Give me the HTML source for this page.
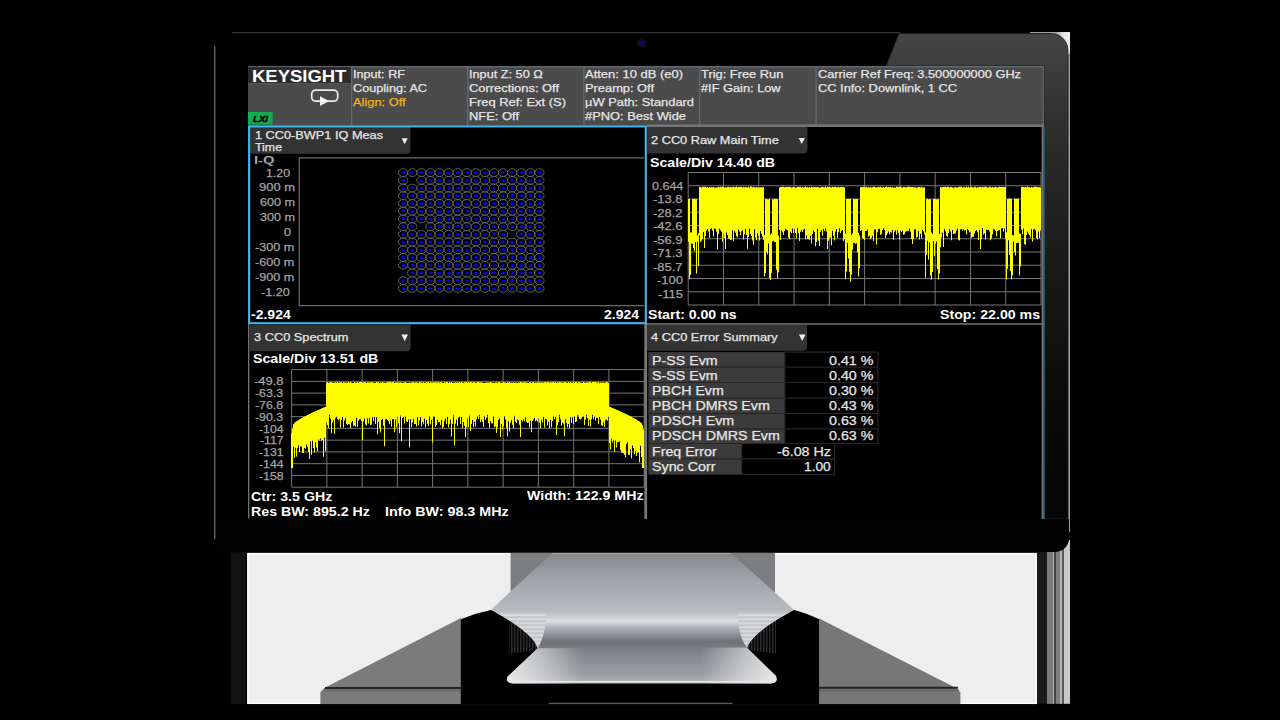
<!DOCTYPE html>
<html><head><meta charset="utf-8">
<style>
html,body{margin:0;padding:0;background:#000;}
body{width:1280px;height:720px;overflow:hidden;position:relative;font-family:"Liberation Sans", sans-serif;}
svg{position:absolute;left:0;top:0;}
.t{position:absolute;white-space:nowrap;line-height:1;z-index:2;transform-origin:0 0;-webkit-text-stroke:0.25px currentColor;}
</style></head>
<body>
<svg width="1280" height="720" viewBox="0 0 1280 720" style="z-index:0">
  <defs>
    <linearGradient id="bzR" gradientUnits="userSpaceOnUse" x1="0" y1="32" x2="0" y2="519">
      <stop offset="0" stop-color="#454545"/>
      <stop offset="0.24" stop-color="#2a2a2a"/>
      <stop offset="0.45" stop-color="#1c1c1c"/>
      <stop offset="0.6" stop-color="#131313"/>
      <stop offset="0.75" stop-color="#0a0a0a"/>
      <stop offset="1" stop-color="#050505"/>
    </linearGradient>
    <linearGradient id="stand" gradientUnits="userSpaceOnUse" x1="0" y1="553" x2="0" y2="683.5">
      <stop offset="0" stop-color="#84868a"/>
      <stop offset="0.15" stop-color="#9a9da1"/>
      <stop offset="0.36" stop-color="#b0b3b7"/>
      <stop offset="0.45" stop-color="#b8bbbf"/>
      <stop offset="0.52" stop-color="#dcdfe2"/>
      <stop offset="0.57" stop-color="#b0b3b7"/>
      <stop offset="0.68" stop-color="#6e7176"/>
      <stop offset="0.78" stop-color="#85888c"/>
      <stop offset="0.93" stop-color="#9a9da3"/>
      <stop offset="0.965" stop-color="#a5a8ac"/>
      <stop offset="1" stop-color="#bdbdbd"/>
    </linearGradient>
    <linearGradient id="standSide" gradientUnits="userSpaceOnUse" x1="507" y1="0" x2="777" y2="0">
      <stop offset="0" stop-color="#ffffff" stop-opacity="0.75"/>
      <stop offset="0.13" stop-color="#ffffff" stop-opacity="0.45"/>
      <stop offset="0.28" stop-color="#ffffff" stop-opacity="0"/>
      <stop offset="0.72" stop-color="#ffffff" stop-opacity="0"/>
      <stop offset="0.87" stop-color="#ffffff" stop-opacity="0.45"/>
      <stop offset="1" stop-color="#ffffff" stop-opacity="0.75"/>
    </linearGradient>
    <linearGradient id="neckL" gradientUnits="userSpaceOnUse" x1="0" y1="610" x2="0" y2="648">
      <stop offset="0" stop-color="#c9cbce"/>
      <stop offset="0.6" stop-color="#bfc1c4"/>
      <stop offset="1" stop-color="#77797c"/>
    </linearGradient>
    <pattern id="stripes" patternUnits="userSpaceOnUse" x="0" y="610" width="10" height="4">
      <rect width="10" height="4" fill="#d5d7da"/>
      <rect y="2.5" width="10" height="1.5" fill="#c0c2c5"/>
    </pattern>
    <linearGradient id="silver" x1="0" y1="0" x2="1" y2="0">
      <stop offset="0" stop-color="#d8d8d8"/>
      <stop offset="0.3" stop-color="#9a9a9a"/>
      <stop offset="0.6" stop-color="#e0e0e0"/>
      <stop offset="1" stop-color="#f0f0f0"/>
    </linearGradient>
    <pattern id="vstripes" patternUnits="userSpaceOnUse" x="0.3" y="0" width="3" height="10">
      <rect width="3" height="10" fill="#000"/>
      <rect x="1" width="1.1" height="10" fill="#3e3e3e"/>
    </pattern>
  </defs>
  <!-- bezel lines -->
  <path d="M232 32.6H900" stroke="#333" stroke-width="1.3"/>
  <path d="M214.8 46V539" stroke="#8a8a8a" stroke-width="1"/>
  <!-- silver corner -->
  <rect x="1050" y="32" width="20" height="22" fill="url(#silver)"/>
  <path d="M1030 32.8H1052" stroke="#a0a0a0" stroke-width="1.6"/>
  <path d="M899 33.5H1051A17 17 0 0 1 1068 50.5V519H1044V66H886Z" fill="url(#bzR)" stroke="#1c1c1c" stroke-width="0.8"/>
  <path d="M1069.2 52V532" stroke="#b0b0b0" stroke-width="1.4"/>
  <!-- bottom bezel -->
  <circle cx="641.7" cy="43.2" r="3" fill="#0a0a55"/>
  <circle cx="641.7" cy="43.2" r="4" fill="none" stroke="#1a1a1a" stroke-width="1"/>

  <!-- stand area -->
  <rect x="230.8" y="552.3" width="15" height="151.7" fill="#121212"/>
  <rect x="247.8" y="553.6" width="788.4" height="149.7" fill="#eeeeee" stroke="#ffffff" stroke-width="1.5"/>
  <rect x="1037" y="540" width="33" height="163.8" fill="#1a1a1a"/>
  <g>
    <rect x="1047" y="540" width="6" height="163.8" fill="#7a7a7a"/>
    <rect x="1053" y="540" width="1.3" height="163.8" fill="#b0b0b0"/>
    <rect x="1054.3" y="540" width="1.7" height="163.8" fill="#444"/>
    <rect x="1056" y="540" width="4" height="163.8" fill="#808080"/>
    <rect x="1060" y="540" width="2" height="163.8" fill="#b4b4b4"/>
    <rect x="1062" y="540" width="2" height="163.8" fill="#585858"/>
    <rect x="1064" y="540" width="6" height="163.8" fill="#c8c8c8"/>
  </g>
  <path d="M216 519H1069V538A14 14 0 0 1 1055 552H216Z" fill="#030303"/>
  <!-- gray triangles top -->
  <rect x="510.6" y="553" width="264.4" height="39.6" fill="#7c7d80"/>
  <!-- left gray region -->
  <path d="M461 704V618.1L326.7 686.8Q322 689 320.4 692.2V704Z" fill="#7b7b7b"/>
  <path d="M325 688H461" stroke="#222" stroke-width="2"/>
  <path d="M324 690.2H461" stroke="#6a6a6a" stroke-width="2"/>
  <!-- right gray region -->
  <path d="M819.2 704V618.6L953.6 686.8Q958.4 689 960.4 692.2V704Z" fill="#777"/>
  <path d="M819.2 687.8H958" stroke="#222" stroke-width="2"/>
  <path d="M819.2 690.4H959" stroke="#6a6a6a" stroke-width="2"/>
  <!-- black region under stand/ears -->
  <path d="M460.8 704V619.2Q476 613 490.8 610H794.2Q806 613 819.2 619.2V704Z" fill="#000"/>
  <path d="M508.9 653.9L537.2 649.7V612H508.9Z" fill="url(#vstripes)"/>
  <path d="M776.1 653.9L747.2 649.7V612H776.1Z" fill="url(#vstripes)"/>
  <!-- stand body -->
  <path d="M551.9 553H730.9L794.2 610C780 617 750 635 747.2 647.8L775.8 675.8Q779 682.5 771 683.5H513Q505 682.5 507.5 676.7L537.5 648.3C535 635 505 617 490.8 610Z" fill="url(#stand)"/>
  <!-- base side highlights -->
  <path d="M537.5 648.3L507.5 676.7Q505 682.5 513 683.5H771Q779 682.5 775.8 675.8L746.7 647.5Z" fill="url(#standSide)"/>
  <!-- striped neck sides -->
  <path d="M495.5 612.5C509 619 535 636 537.5 648.3C542 642 546 630 546.7 612.5Z" fill="url(#stripes)"/>
  <path d="M789.5 612.5C776 619 750 636 747.2 647.8C742 642 738 630 737.5 612.5Z" fill="url(#stripes)"/>
  <path d="M512 681.8H772" stroke="#e6e6e6" stroke-width="1.6"/>
  <path d="M548.6 703.3H732.6" stroke="#707070" stroke-width="1"/>
  <path d="M551.9 553.5H730.9" stroke="#a5a7aa" stroke-width="1"/>
</svg>

<svg width="1280" height="720" viewBox="0 0 1280 720" style="z-index:1">
  <!-- screen background -->
  <rect x="248" y="125" width="796" height="394" fill="#000"/>
  <!-- header -->
  <rect x="248" y="66.3" width="795.6" height="59.2" fill="#4b4b4b"/>
  <path d="M248 66.8H1043.6" stroke="#6f7f88" stroke-width="1"/>
  <rect x="248" y="67" width="102.8" height="16.5" fill="#2b2b2b"/>
  <path d="M248 83.6H350.8" stroke="#5a5a5a" stroke-width="1"/>
  <g stroke="#6c6c6c" stroke-width="1.2">
    <path d="M351.7 67V125.5"/><path d="M467.7 67V125.5"/><path d="M583.9 67V125.5"/><path d="M699.7 67V125.5"/><path d="M816.1 67V125.5"/><path d="M1043.2 67V125.5"/>
  </g>
  <rect x="248" y="112" width="24.6" height="12.5" fill="#12ad50"/>
  <text x="253" y="121.6" font-family="Liberation Sans" font-weight="bold" font-style="italic" font-size="9" textLength="15" lengthAdjust="spacingAndGlyphs" fill="#050505" stroke="#050505" stroke-width="0.5">LXI</text>
  <rect x="311.7" y="90.2" width="26" height="11" rx="4" fill="none" stroke="#ececec" stroke-width="1.7"/>
  <path d="M320 96.3L329 101.1L320 105.9Z" fill="#f4f4f4"/>

  <!-- gray panel borders -->
  <g stroke="#767676">
    <path d="M647 125.8H1044" stroke-width="2.6"/>
    <path d="M1042.7 126V519" stroke-width="2.1"/><path d="M1044.3 126V519" stroke="#2a5a70" stroke-width="1.2"/>
    <path d="M645 324H1044" stroke-width="1.6"/>
    <path d="M645.7 324V518.8" stroke-width="2.8"/>
    <path d="M248.7 324V518.5" stroke-width="1.3"/>
  </g>
  <!-- title boxes -->
  <g fill="#333">
    <path d="M250 127H410.4V149.7A4 4 0 0 1 406.4 153.7H250Z"/>
    <path d="M647.3 127H807.4V149.5A4 4 0 0 1 803.4 153.5H647.3Z"/>
    <path d="M249.3 325H410.6V347.2A4 4 0 0 1 406.6 351.2H249.3Z"/>
    <path d="M647 325H807V346.7A4 4 0 0 1 803 350.7H647Z"/>
  </g>
  <g fill="#f0f0f0">
    <path d="M401.7 138.2H407.6L404.65 144.2Z"/>
    <path d="M798.7 138.1H804.8L801.75 144.1Z"/>
    <path d="M401.4 334.4H408L404.7 341.3Z"/>
    <path d="M798.9 334.6H805.6L802.25 341.1Z"/>
  </g>
  <!-- plot 1 -->
  <path d="M644 157.8H299.3V305.6H644" fill="none" stroke="#6a6a6a" stroke-width="1.2"/>
  <ellipse cx="403.20" cy="172.60" rx="4.7" ry="3.9" fill="none" stroke="#626262" stroke-width="1"/><ellipse cx="403.19" cy="172.31" rx="1.75" ry="1.5" fill="#0000ff"/><ellipse cx="412.28" cy="172.60" rx="4.7" ry="3.9" fill="none" stroke="#626262" stroke-width="1"/><ellipse cx="411.99" cy="172.91" rx="1.75" ry="1.5" fill="#0000ff"/><ellipse cx="421.36" cy="172.60" rx="4.7" ry="3.9" fill="none" stroke="#626262" stroke-width="1"/><ellipse cx="421.56" cy="172.25" rx="1.75" ry="1.5" fill="#0000ff"/><ellipse cx="430.44" cy="172.60" rx="4.7" ry="3.9" fill="none" stroke="#626262" stroke-width="1"/><ellipse cx="430.58" cy="172.37" rx="1.75" ry="1.5" fill="#0000ff"/><ellipse cx="439.52" cy="172.60" rx="4.7" ry="3.9" fill="none" stroke="#626262" stroke-width="1"/><ellipse cx="439.48" cy="172.68" rx="1.75" ry="1.5" fill="#0000ff"/><ellipse cx="448.60" cy="172.60" rx="4.7" ry="3.9" fill="none" stroke="#626262" stroke-width="1"/><ellipse cx="448.24" cy="172.95" rx="1.75" ry="1.5" fill="#0000ff"/><ellipse cx="457.68" cy="172.60" rx="4.7" ry="3.9" fill="none" stroke="#626262" stroke-width="1"/><ellipse cx="457.55" cy="172.32" rx="1.75" ry="1.5" fill="#0000ff"/><ellipse cx="466.76" cy="172.60" rx="4.7" ry="3.9" fill="none" stroke="#626262" stroke-width="1"/><ellipse cx="466.98" cy="172.29" rx="1.75" ry="1.5" fill="#0000ff"/><ellipse cx="475.84" cy="172.60" rx="4.7" ry="3.9" fill="none" stroke="#626262" stroke-width="1"/><ellipse cx="475.47" cy="172.72" rx="1.75" ry="1.5" fill="#0000ff"/><ellipse cx="484.92" cy="172.60" rx="4.7" ry="3.9" fill="none" stroke="#626262" stroke-width="1"/><ellipse cx="484.90" cy="172.92" rx="1.75" ry="1.5" fill="#0000ff"/><ellipse cx="494.00" cy="172.60" rx="4.7" ry="3.9" fill="none" stroke="#626262" stroke-width="1"/><ellipse cx="494.23" cy="172.37" rx="1.75" ry="1.5" fill="#0000ff"/><ellipse cx="503.08" cy="172.60" rx="4.7" ry="3.9" fill="none" stroke="#626262" stroke-width="1"/><ellipse cx="502.72" cy="172.68" rx="1.75" ry="1.5" fill="#0000ff"/><ellipse cx="512.16" cy="172.60" rx="4.7" ry="3.9" fill="none" stroke="#626262" stroke-width="1"/><ellipse cx="512.14" cy="172.44" rx="1.75" ry="1.5" fill="#0000ff"/><ellipse cx="521.24" cy="172.60" rx="4.7" ry="3.9" fill="none" stroke="#626262" stroke-width="1"/><ellipse cx="521.57" cy="172.37" rx="1.75" ry="1.5" fill="#0000ff"/><ellipse cx="530.32" cy="172.60" rx="4.7" ry="3.9" fill="none" stroke="#626262" stroke-width="1"/><ellipse cx="530.43" cy="172.26" rx="1.75" ry="1.5" fill="#0000ff"/><ellipse cx="539.40" cy="172.60" rx="4.7" ry="3.9" fill="none" stroke="#626262" stroke-width="1"/><ellipse cx="539.74" cy="172.96" rx="1.75" ry="1.5" fill="#0000ff"/><ellipse cx="403.20" cy="180.32" rx="4.7" ry="3.9" fill="none" stroke="#626262" stroke-width="1"/><ellipse cx="403.29" cy="180.18" rx="1.75" ry="1.5" fill="#0000ff"/><ellipse cx="421.36" cy="180.32" rx="4.7" ry="3.9" fill="none" stroke="#626262" stroke-width="1"/><ellipse cx="421.54" cy="180.64" rx="1.75" ry="1.5" fill="#0000ff"/><ellipse cx="430.44" cy="180.32" rx="4.7" ry="3.9" fill="none" stroke="#626262" stroke-width="1"/><ellipse cx="430.68" cy="179.95" rx="1.75" ry="1.5" fill="#0000ff"/><ellipse cx="439.52" cy="180.32" rx="4.7" ry="3.9" fill="none" stroke="#626262" stroke-width="1"/><ellipse cx="439.52" cy="180.03" rx="1.75" ry="1.5" fill="#0000ff"/><ellipse cx="448.60" cy="180.32" rx="4.7" ry="3.9" fill="none" stroke="#626262" stroke-width="1"/><ellipse cx="448.64" cy="180.68" rx="1.75" ry="1.5" fill="#0000ff"/><ellipse cx="457.68" cy="180.32" rx="4.7" ry="3.9" fill="none" stroke="#626262" stroke-width="1"/><ellipse cx="457.97" cy="180.12" rx="1.75" ry="1.5" fill="#0000ff"/><ellipse cx="466.76" cy="180.32" rx="4.7" ry="3.9" fill="none" stroke="#626262" stroke-width="1"/><ellipse cx="466.80" cy="180.17" rx="1.75" ry="1.5" fill="#0000ff"/><ellipse cx="475.84" cy="180.32" rx="4.7" ry="3.9" fill="none" stroke="#626262" stroke-width="1"/><ellipse cx="475.57" cy="180.51" rx="1.75" ry="1.5" fill="#0000ff"/><ellipse cx="484.92" cy="180.32" rx="4.7" ry="3.9" fill="none" stroke="#626262" stroke-width="1"/><ellipse cx="485.13" cy="180.19" rx="1.75" ry="1.5" fill="#0000ff"/><ellipse cx="494.00" cy="180.32" rx="4.7" ry="3.9" fill="none" stroke="#626262" stroke-width="1"/><ellipse cx="493.94" cy="180.48" rx="1.75" ry="1.5" fill="#0000ff"/><ellipse cx="503.08" cy="180.32" rx="4.7" ry="3.9" fill="none" stroke="#626262" stroke-width="1"/><ellipse cx="503.26" cy="180.29" rx="1.75" ry="1.5" fill="#0000ff"/><ellipse cx="512.16" cy="180.32" rx="4.7" ry="3.9" fill="none" stroke="#626262" stroke-width="1"/><ellipse cx="511.85" cy="180.00" rx="1.75" ry="1.5" fill="#0000ff"/><ellipse cx="521.24" cy="180.32" rx="4.7" ry="3.9" fill="none" stroke="#626262" stroke-width="1"/><ellipse cx="520.98" cy="180.58" rx="1.75" ry="1.5" fill="#0000ff"/><ellipse cx="530.32" cy="180.32" rx="4.7" ry="3.9" fill="none" stroke="#626262" stroke-width="1"/><ellipse cx="530.32" cy="180.44" rx="1.75" ry="1.5" fill="#0000ff"/><ellipse cx="539.40" cy="180.32" rx="4.7" ry="3.9" fill="none" stroke="#626262" stroke-width="1"/><ellipse cx="539.29" cy="180.22" rx="1.75" ry="1.5" fill="#0000ff"/><ellipse cx="403.20" cy="188.04" rx="4.7" ry="3.9" fill="none" stroke="#626262" stroke-width="1"/><ellipse cx="402.94" cy="188.42" rx="1.75" ry="1.5" fill="#0000ff"/><ellipse cx="412.28" cy="188.04" rx="4.7" ry="3.9" fill="none" stroke="#626262" stroke-width="1"/><ellipse cx="412.36" cy="187.74" rx="1.75" ry="1.5" fill="#0000ff"/><ellipse cx="421.36" cy="188.04" rx="4.7" ry="3.9" fill="none" stroke="#626262" stroke-width="1"/><ellipse cx="421.52" cy="188.12" rx="1.75" ry="1.5" fill="#0000ff"/><ellipse cx="430.44" cy="188.04" rx="4.7" ry="3.9" fill="none" stroke="#626262" stroke-width="1"/><ellipse cx="430.53" cy="188.26" rx="1.75" ry="1.5" fill="#0000ff"/><ellipse cx="439.52" cy="188.04" rx="4.7" ry="3.9" fill="none" stroke="#626262" stroke-width="1"/><ellipse cx="439.61" cy="188.34" rx="1.75" ry="1.5" fill="#0000ff"/><ellipse cx="448.60" cy="188.04" rx="4.7" ry="3.9" fill="none" stroke="#626262" stroke-width="1"/><ellipse cx="448.98" cy="187.97" rx="1.75" ry="1.5" fill="#0000ff"/><ellipse cx="457.68" cy="188.04" rx="4.7" ry="3.9" fill="none" stroke="#626262" stroke-width="1"/><ellipse cx="457.80" cy="187.94" rx="1.75" ry="1.5" fill="#0000ff"/><ellipse cx="466.76" cy="188.04" rx="4.7" ry="3.9" fill="none" stroke="#626262" stroke-width="1"/><ellipse cx="466.69" cy="187.93" rx="1.75" ry="1.5" fill="#0000ff"/><ellipse cx="475.84" cy="188.04" rx="4.7" ry="3.9" fill="none" stroke="#626262" stroke-width="1"/><ellipse cx="475.96" cy="187.92" rx="1.75" ry="1.5" fill="#0000ff"/><ellipse cx="484.92" cy="188.04" rx="4.7" ry="3.9" fill="none" stroke="#626262" stroke-width="1"/><ellipse cx="484.80" cy="188.32" rx="1.75" ry="1.5" fill="#0000ff"/><ellipse cx="494.00" cy="188.04" rx="4.7" ry="3.9" fill="none" stroke="#626262" stroke-width="1"/><ellipse cx="494.24" cy="188.18" rx="1.75" ry="1.5" fill="#0000ff"/><ellipse cx="503.08" cy="188.04" rx="4.7" ry="3.9" fill="none" stroke="#626262" stroke-width="1"/><ellipse cx="503.35" cy="187.95" rx="1.75" ry="1.5" fill="#0000ff"/><ellipse cx="512.16" cy="188.04" rx="4.7" ry="3.9" fill="none" stroke="#626262" stroke-width="1"/><ellipse cx="512.27" cy="187.84" rx="1.75" ry="1.5" fill="#0000ff"/><ellipse cx="521.24" cy="188.04" rx="4.7" ry="3.9" fill="none" stroke="#626262" stroke-width="1"/><ellipse cx="521.09" cy="187.72" rx="1.75" ry="1.5" fill="#0000ff"/><ellipse cx="530.32" cy="188.04" rx="4.7" ry="3.9" fill="none" stroke="#626262" stroke-width="1"/><ellipse cx="530.56" cy="188.38" rx="1.75" ry="1.5" fill="#0000ff"/><ellipse cx="539.40" cy="188.04" rx="4.7" ry="3.9" fill="none" stroke="#626262" stroke-width="1"/><ellipse cx="539.24" cy="187.94" rx="1.75" ry="1.5" fill="#0000ff"/><ellipse cx="403.20" cy="195.76" rx="4.7" ry="3.9" fill="none" stroke="#626262" stroke-width="1"/><ellipse cx="402.89" cy="195.47" rx="1.75" ry="1.5" fill="#0000ff"/><ellipse cx="412.28" cy="195.76" rx="4.7" ry="3.9" fill="none" stroke="#626262" stroke-width="1"/><ellipse cx="412.39" cy="196.07" rx="1.75" ry="1.5" fill="#0000ff"/><ellipse cx="421.36" cy="195.76" rx="4.7" ry="3.9" fill="none" stroke="#626262" stroke-width="1"/><ellipse cx="421.03" cy="195.56" rx="1.75" ry="1.5" fill="#0000ff"/><ellipse cx="430.44" cy="195.76" rx="4.7" ry="3.9" fill="none" stroke="#626262" stroke-width="1"/><ellipse cx="430.65" cy="195.54" rx="1.75" ry="1.5" fill="#0000ff"/><ellipse cx="439.52" cy="195.76" rx="4.7" ry="3.9" fill="none" stroke="#626262" stroke-width="1"/><ellipse cx="439.82" cy="195.64" rx="1.75" ry="1.5" fill="#0000ff"/><ellipse cx="448.60" cy="195.76" rx="4.7" ry="3.9" fill="none" stroke="#626262" stroke-width="1"/><ellipse cx="448.58" cy="195.52" rx="1.75" ry="1.5" fill="#0000ff"/><ellipse cx="457.68" cy="195.76" rx="4.7" ry="3.9" fill="none" stroke="#626262" stroke-width="1"/><ellipse cx="457.51" cy="195.70" rx="1.75" ry="1.5" fill="#0000ff"/><ellipse cx="466.76" cy="195.76" rx="4.7" ry="3.9" fill="none" stroke="#626262" stroke-width="1"/><ellipse cx="466.58" cy="195.94" rx="1.75" ry="1.5" fill="#0000ff"/><ellipse cx="475.84" cy="195.76" rx="4.7" ry="3.9" fill="none" stroke="#626262" stroke-width="1"/><ellipse cx="475.46" cy="195.87" rx="1.75" ry="1.5" fill="#0000ff"/><ellipse cx="484.92" cy="195.76" rx="4.7" ry="3.9" fill="none" stroke="#626262" stroke-width="1"/><ellipse cx="485.16" cy="195.62" rx="1.75" ry="1.5" fill="#0000ff"/><ellipse cx="494.00" cy="195.76" rx="4.7" ry="3.9" fill="none" stroke="#626262" stroke-width="1"/><ellipse cx="493.75" cy="195.46" rx="1.75" ry="1.5" fill="#0000ff"/><ellipse cx="503.08" cy="195.76" rx="4.7" ry="3.9" fill="none" stroke="#626262" stroke-width="1"/><ellipse cx="502.74" cy="195.99" rx="1.75" ry="1.5" fill="#0000ff"/><ellipse cx="512.16" cy="195.76" rx="4.7" ry="3.9" fill="none" stroke="#626262" stroke-width="1"/><ellipse cx="512.24" cy="195.37" rx="1.75" ry="1.5" fill="#0000ff"/><ellipse cx="521.24" cy="195.76" rx="4.7" ry="3.9" fill="none" stroke="#626262" stroke-width="1"/><ellipse cx="521.20" cy="195.84" rx="1.75" ry="1.5" fill="#0000ff"/><ellipse cx="530.32" cy="195.76" rx="4.7" ry="3.9" fill="none" stroke="#626262" stroke-width="1"/><ellipse cx="530.18" cy="195.39" rx="1.75" ry="1.5" fill="#0000ff"/><ellipse cx="539.40" cy="195.76" rx="4.7" ry="3.9" fill="none" stroke="#626262" stroke-width="1"/><ellipse cx="539.34" cy="195.64" rx="1.75" ry="1.5" fill="#0000ff"/><ellipse cx="403.20" cy="203.48" rx="4.7" ry="3.9" fill="none" stroke="#626262" stroke-width="1"/><ellipse cx="403.58" cy="203.37" rx="1.75" ry="1.5" fill="#0000ff"/><ellipse cx="412.28" cy="203.48" rx="4.7" ry="3.9" fill="none" stroke="#626262" stroke-width="1"/><ellipse cx="412.62" cy="203.77" rx="1.75" ry="1.5" fill="#0000ff"/><ellipse cx="421.36" cy="203.48" rx="4.7" ry="3.9" fill="none" stroke="#626262" stroke-width="1"/><ellipse cx="421.42" cy="203.18" rx="1.75" ry="1.5" fill="#0000ff"/><ellipse cx="430.44" cy="203.48" rx="4.7" ry="3.9" fill="none" stroke="#626262" stroke-width="1"/><ellipse cx="430.69" cy="203.15" rx="1.75" ry="1.5" fill="#0000ff"/><ellipse cx="439.52" cy="203.48" rx="4.7" ry="3.9" fill="none" stroke="#626262" stroke-width="1"/><ellipse cx="439.57" cy="203.16" rx="1.75" ry="1.5" fill="#0000ff"/><ellipse cx="448.60" cy="203.48" rx="4.7" ry="3.9" fill="none" stroke="#626262" stroke-width="1"/><ellipse cx="448.27" cy="203.41" rx="1.75" ry="1.5" fill="#0000ff"/><ellipse cx="457.68" cy="203.48" rx="4.7" ry="3.9" fill="none" stroke="#626262" stroke-width="1"/><ellipse cx="457.41" cy="203.87" rx="1.75" ry="1.5" fill="#0000ff"/><ellipse cx="466.76" cy="203.48" rx="4.7" ry="3.9" fill="none" stroke="#626262" stroke-width="1"/><ellipse cx="466.82" cy="203.80" rx="1.75" ry="1.5" fill="#0000ff"/><ellipse cx="475.84" cy="203.48" rx="4.7" ry="3.9" fill="none" stroke="#626262" stroke-width="1"/><ellipse cx="476.21" cy="203.69" rx="1.75" ry="1.5" fill="#0000ff"/><ellipse cx="484.92" cy="203.48" rx="4.7" ry="3.9" fill="none" stroke="#626262" stroke-width="1"/><ellipse cx="485.04" cy="203.46" rx="1.75" ry="1.5" fill="#0000ff"/><ellipse cx="494.00" cy="203.48" rx="4.7" ry="3.9" fill="none" stroke="#626262" stroke-width="1"/><ellipse cx="494.22" cy="203.62" rx="1.75" ry="1.5" fill="#0000ff"/><ellipse cx="503.08" cy="203.48" rx="4.7" ry="3.9" fill="none" stroke="#626262" stroke-width="1"/><ellipse cx="502.81" cy="203.50" rx="1.75" ry="1.5" fill="#0000ff"/><ellipse cx="512.16" cy="203.48" rx="4.7" ry="3.9" fill="none" stroke="#626262" stroke-width="1"/><ellipse cx="512.09" cy="203.49" rx="1.75" ry="1.5" fill="#0000ff"/><ellipse cx="521.24" cy="203.48" rx="4.7" ry="3.9" fill="none" stroke="#626262" stroke-width="1"/><ellipse cx="521.41" cy="203.63" rx="1.75" ry="1.5" fill="#0000ff"/><ellipse cx="530.32" cy="203.48" rx="4.7" ry="3.9" fill="none" stroke="#626262" stroke-width="1"/><ellipse cx="530.38" cy="203.71" rx="1.75" ry="1.5" fill="#0000ff"/><ellipse cx="539.40" cy="203.48" rx="4.7" ry="3.9" fill="none" stroke="#626262" stroke-width="1"/><ellipse cx="539.66" cy="203.15" rx="1.75" ry="1.5" fill="#0000ff"/><ellipse cx="403.20" cy="211.20" rx="4.7" ry="3.9" fill="none" stroke="#626262" stroke-width="1"/><ellipse cx="402.92" cy="210.84" rx="1.75" ry="1.5" fill="#0000ff"/><ellipse cx="412.28" cy="211.20" rx="4.7" ry="3.9" fill="none" stroke="#626262" stroke-width="1"/><ellipse cx="412.01" cy="211.57" rx="1.75" ry="1.5" fill="#0000ff"/><ellipse cx="421.36" cy="211.20" rx="4.7" ry="3.9" fill="none" stroke="#626262" stroke-width="1"/><ellipse cx="421.21" cy="211.15" rx="1.75" ry="1.5" fill="#0000ff"/><ellipse cx="430.44" cy="211.20" rx="4.7" ry="3.9" fill="none" stroke="#626262" stroke-width="1"/><ellipse cx="430.41" cy="211.25" rx="1.75" ry="1.5" fill="#0000ff"/><ellipse cx="439.52" cy="211.20" rx="4.7" ry="3.9" fill="none" stroke="#626262" stroke-width="1"/><ellipse cx="439.34" cy="211.42" rx="1.75" ry="1.5" fill="#0000ff"/><ellipse cx="448.60" cy="211.20" rx="4.7" ry="3.9" fill="none" stroke="#626262" stroke-width="1"/><ellipse cx="448.47" cy="211.48" rx="1.75" ry="1.5" fill="#0000ff"/><ellipse cx="457.68" cy="211.20" rx="4.7" ry="3.9" fill="none" stroke="#626262" stroke-width="1"/><ellipse cx="457.92" cy="210.80" rx="1.75" ry="1.5" fill="#0000ff"/><ellipse cx="466.76" cy="211.20" rx="4.7" ry="3.9" fill="none" stroke="#626262" stroke-width="1"/><ellipse cx="466.80" cy="210.87" rx="1.75" ry="1.5" fill="#0000ff"/><ellipse cx="475.84" cy="211.20" rx="4.7" ry="3.9" fill="none" stroke="#626262" stroke-width="1"/><ellipse cx="476.15" cy="210.86" rx="1.75" ry="1.5" fill="#0000ff"/><ellipse cx="484.92" cy="211.20" rx="4.7" ry="3.9" fill="none" stroke="#626262" stroke-width="1"/><ellipse cx="484.73" cy="211.42" rx="1.75" ry="1.5" fill="#0000ff"/><ellipse cx="494.00" cy="211.20" rx="4.7" ry="3.9" fill="none" stroke="#626262" stroke-width="1"/><ellipse cx="494.07" cy="211.33" rx="1.75" ry="1.5" fill="#0000ff"/><ellipse cx="503.08" cy="211.20" rx="4.7" ry="3.9" fill="none" stroke="#626262" stroke-width="1"/><ellipse cx="503.01" cy="211.22" rx="1.75" ry="1.5" fill="#0000ff"/><ellipse cx="512.16" cy="211.20" rx="4.7" ry="3.9" fill="none" stroke="#626262" stroke-width="1"/><ellipse cx="511.92" cy="211.17" rx="1.75" ry="1.5" fill="#0000ff"/><ellipse cx="521.24" cy="211.20" rx="4.7" ry="3.9" fill="none" stroke="#626262" stroke-width="1"/><ellipse cx="521.05" cy="211.34" rx="1.75" ry="1.5" fill="#0000ff"/><ellipse cx="530.32" cy="211.20" rx="4.7" ry="3.9" fill="none" stroke="#626262" stroke-width="1"/><ellipse cx="530.01" cy="210.91" rx="1.75" ry="1.5" fill="#0000ff"/><ellipse cx="539.40" cy="211.20" rx="4.7" ry="3.9" fill="none" stroke="#626262" stroke-width="1"/><ellipse cx="539.16" cy="211.23" rx="1.75" ry="1.5" fill="#0000ff"/><ellipse cx="403.20" cy="218.92" rx="4.7" ry="3.9" fill="none" stroke="#626262" stroke-width="1"/><ellipse cx="403.27" cy="218.52" rx="1.75" ry="1.5" fill="#0000ff"/><ellipse cx="412.28" cy="218.92" rx="4.7" ry="3.9" fill="none" stroke="#626262" stroke-width="1"/><ellipse cx="412.67" cy="219.19" rx="1.75" ry="1.5" fill="#0000ff"/><ellipse cx="421.36" cy="218.92" rx="4.7" ry="3.9" fill="none" stroke="#626262" stroke-width="1"/><ellipse cx="421.26" cy="218.65" rx="1.75" ry="1.5" fill="#0000ff"/><ellipse cx="430.44" cy="218.92" rx="4.7" ry="3.9" fill="none" stroke="#626262" stroke-width="1"/><ellipse cx="430.70" cy="219.30" rx="1.75" ry="1.5" fill="#0000ff"/><ellipse cx="439.52" cy="218.92" rx="4.7" ry="3.9" fill="none" stroke="#626262" stroke-width="1"/><ellipse cx="439.26" cy="219.12" rx="1.75" ry="1.5" fill="#0000ff"/><ellipse cx="448.60" cy="218.92" rx="4.7" ry="3.9" fill="none" stroke="#626262" stroke-width="1"/><ellipse cx="448.85" cy="219.27" rx="1.75" ry="1.5" fill="#0000ff"/><ellipse cx="457.68" cy="218.92" rx="4.7" ry="3.9" fill="none" stroke="#626262" stroke-width="1"/><ellipse cx="457.45" cy="218.62" rx="1.75" ry="1.5" fill="#0000ff"/><ellipse cx="466.76" cy="218.92" rx="4.7" ry="3.9" fill="none" stroke="#626262" stroke-width="1"/><ellipse cx="466.49" cy="218.71" rx="1.75" ry="1.5" fill="#0000ff"/><ellipse cx="475.84" cy="218.92" rx="4.7" ry="3.9" fill="none" stroke="#626262" stroke-width="1"/><ellipse cx="476.16" cy="219.25" rx="1.75" ry="1.5" fill="#0000ff"/><ellipse cx="484.92" cy="218.92" rx="4.7" ry="3.9" fill="none" stroke="#626262" stroke-width="1"/><ellipse cx="484.90" cy="218.62" rx="1.75" ry="1.5" fill="#0000ff"/><ellipse cx="494.00" cy="218.92" rx="4.7" ry="3.9" fill="none" stroke="#626262" stroke-width="1"/><ellipse cx="493.88" cy="218.71" rx="1.75" ry="1.5" fill="#0000ff"/><ellipse cx="503.08" cy="218.92" rx="4.7" ry="3.9" fill="none" stroke="#626262" stroke-width="1"/><ellipse cx="503.20" cy="219.10" rx="1.75" ry="1.5" fill="#0000ff"/><ellipse cx="512.16" cy="218.92" rx="4.7" ry="3.9" fill="none" stroke="#626262" stroke-width="1"/><ellipse cx="512.38" cy="218.87" rx="1.75" ry="1.5" fill="#0000ff"/><ellipse cx="521.24" cy="218.92" rx="4.7" ry="3.9" fill="none" stroke="#626262" stroke-width="1"/><ellipse cx="521.21" cy="218.89" rx="1.75" ry="1.5" fill="#0000ff"/><ellipse cx="530.32" cy="218.92" rx="4.7" ry="3.9" fill="none" stroke="#626262" stroke-width="1"/><ellipse cx="530.22" cy="218.88" rx="1.75" ry="1.5" fill="#0000ff"/><ellipse cx="539.40" cy="218.92" rx="4.7" ry="3.9" fill="none" stroke="#626262" stroke-width="1"/><ellipse cx="539.55" cy="219.09" rx="1.75" ry="1.5" fill="#0000ff"/><ellipse cx="403.20" cy="226.64" rx="4.7" ry="3.9" fill="none" stroke="#626262" stroke-width="1"/><ellipse cx="403.06" cy="226.69" rx="1.75" ry="1.5" fill="#0000ff"/><ellipse cx="412.28" cy="226.64" rx="4.7" ry="3.9" fill="none" stroke="#626262" stroke-width="1"/><ellipse cx="412.00" cy="226.28" rx="1.75" ry="1.5" fill="#0000ff"/><ellipse cx="430.44" cy="226.64" rx="4.7" ry="3.9" fill="none" stroke="#626262" stroke-width="1"/><ellipse cx="430.35" cy="226.53" rx="1.75" ry="1.5" fill="#0000ff"/><ellipse cx="439.52" cy="226.64" rx="4.7" ry="3.9" fill="none" stroke="#626262" stroke-width="1"/><ellipse cx="439.15" cy="226.30" rx="1.75" ry="1.5" fill="#0000ff"/><ellipse cx="448.60" cy="226.64" rx="4.7" ry="3.9" fill="none" stroke="#626262" stroke-width="1"/><ellipse cx="448.54" cy="226.99" rx="1.75" ry="1.5" fill="#0000ff"/><ellipse cx="457.68" cy="226.64" rx="4.7" ry="3.9" fill="none" stroke="#626262" stroke-width="1"/><ellipse cx="457.95" cy="226.26" rx="1.75" ry="1.5" fill="#0000ff"/><ellipse cx="466.76" cy="226.64" rx="4.7" ry="3.9" fill="none" stroke="#626262" stroke-width="1"/><ellipse cx="466.61" cy="226.53" rx="1.75" ry="1.5" fill="#0000ff"/><ellipse cx="475.84" cy="226.64" rx="4.7" ry="3.9" fill="none" stroke="#626262" stroke-width="1"/><ellipse cx="475.69" cy="226.35" rx="1.75" ry="1.5" fill="#0000ff"/><ellipse cx="484.92" cy="226.64" rx="4.7" ry="3.9" fill="none" stroke="#626262" stroke-width="1"/><ellipse cx="484.99" cy="226.91" rx="1.75" ry="1.5" fill="#0000ff"/><ellipse cx="494.00" cy="226.64" rx="4.7" ry="3.9" fill="none" stroke="#626262" stroke-width="1"/><ellipse cx="493.91" cy="226.38" rx="1.75" ry="1.5" fill="#0000ff"/><ellipse cx="503.08" cy="226.64" rx="4.7" ry="3.9" fill="none" stroke="#626262" stroke-width="1"/><ellipse cx="502.76" cy="226.25" rx="1.75" ry="1.5" fill="#0000ff"/><ellipse cx="512.16" cy="226.64" rx="4.7" ry="3.9" fill="none" stroke="#626262" stroke-width="1"/><ellipse cx="512.37" cy="226.42" rx="1.75" ry="1.5" fill="#0000ff"/><ellipse cx="521.24" cy="226.64" rx="4.7" ry="3.9" fill="none" stroke="#626262" stroke-width="1"/><ellipse cx="521.42" cy="226.87" rx="1.75" ry="1.5" fill="#0000ff"/><ellipse cx="530.32" cy="226.64" rx="4.7" ry="3.9" fill="none" stroke="#626262" stroke-width="1"/><ellipse cx="529.99" cy="226.39" rx="1.75" ry="1.5" fill="#0000ff"/><ellipse cx="539.40" cy="226.64" rx="4.7" ry="3.9" fill="none" stroke="#626262" stroke-width="1"/><ellipse cx="539.25" cy="226.86" rx="1.75" ry="1.5" fill="#0000ff"/><ellipse cx="403.20" cy="234.36" rx="4.7" ry="3.9" fill="none" stroke="#626262" stroke-width="1"/><ellipse cx="403.39" cy="234.20" rx="1.75" ry="1.5" fill="#0000ff"/><ellipse cx="412.28" cy="234.36" rx="4.7" ry="3.9" fill="none" stroke="#626262" stroke-width="1"/><ellipse cx="412.24" cy="234.24" rx="1.75" ry="1.5" fill="#0000ff"/><ellipse cx="421.36" cy="234.36" rx="4.7" ry="3.9" fill="none" stroke="#626262" stroke-width="1"/><ellipse cx="421.34" cy="234.59" rx="1.75" ry="1.5" fill="#0000ff"/><ellipse cx="430.44" cy="234.36" rx="4.7" ry="3.9" fill="none" stroke="#626262" stroke-width="1"/><ellipse cx="430.25" cy="234.61" rx="1.75" ry="1.5" fill="#0000ff"/><ellipse cx="439.52" cy="234.36" rx="4.7" ry="3.9" fill="none" stroke="#626262" stroke-width="1"/><ellipse cx="439.86" cy="234.44" rx="1.75" ry="1.5" fill="#0000ff"/><ellipse cx="448.60" cy="234.36" rx="4.7" ry="3.9" fill="none" stroke="#626262" stroke-width="1"/><ellipse cx="448.97" cy="234.71" rx="1.75" ry="1.5" fill="#0000ff"/><ellipse cx="457.68" cy="234.36" rx="4.7" ry="3.9" fill="none" stroke="#626262" stroke-width="1"/><ellipse cx="457.42" cy="234.75" rx="1.75" ry="1.5" fill="#0000ff"/><ellipse cx="466.76" cy="234.36" rx="4.7" ry="3.9" fill="none" stroke="#626262" stroke-width="1"/><ellipse cx="466.52" cy="234.60" rx="1.75" ry="1.5" fill="#0000ff"/><ellipse cx="475.84" cy="234.36" rx="4.7" ry="3.9" fill="none" stroke="#626262" stroke-width="1"/><ellipse cx="475.54" cy="234.20" rx="1.75" ry="1.5" fill="#0000ff"/><ellipse cx="484.92" cy="234.36" rx="4.7" ry="3.9" fill="none" stroke="#626262" stroke-width="1"/><ellipse cx="484.87" cy="234.63" rx="1.75" ry="1.5" fill="#0000ff"/><ellipse cx="494.00" cy="234.36" rx="4.7" ry="3.9" fill="none" stroke="#626262" stroke-width="1"/><ellipse cx="494.14" cy="234.12" rx="1.75" ry="1.5" fill="#0000ff"/><ellipse cx="503.08" cy="234.36" rx="4.7" ry="3.9" fill="none" stroke="#626262" stroke-width="1"/><ellipse cx="503.40" cy="234.65" rx="1.75" ry="1.5" fill="#0000ff"/><ellipse cx="521.24" cy="234.36" rx="4.7" ry="3.9" fill="none" stroke="#626262" stroke-width="1"/><ellipse cx="521.25" cy="234.00" rx="1.75" ry="1.5" fill="#0000ff"/><ellipse cx="530.32" cy="234.36" rx="4.7" ry="3.9" fill="none" stroke="#626262" stroke-width="1"/><ellipse cx="530.15" cy="234.19" rx="1.75" ry="1.5" fill="#0000ff"/><ellipse cx="539.40" cy="234.36" rx="4.7" ry="3.9" fill="none" stroke="#626262" stroke-width="1"/><ellipse cx="539.34" cy="234.71" rx="1.75" ry="1.5" fill="#0000ff"/><ellipse cx="403.20" cy="242.08" rx="4.7" ry="3.9" fill="none" stroke="#626262" stroke-width="1"/><ellipse cx="403.28" cy="242.34" rx="1.75" ry="1.5" fill="#0000ff"/><ellipse cx="412.28" cy="242.08" rx="4.7" ry="3.9" fill="none" stroke="#626262" stroke-width="1"/><ellipse cx="411.94" cy="241.88" rx="1.75" ry="1.5" fill="#0000ff"/><ellipse cx="421.36" cy="242.08" rx="4.7" ry="3.9" fill="none" stroke="#626262" stroke-width="1"/><ellipse cx="421.55" cy="241.95" rx="1.75" ry="1.5" fill="#0000ff"/><ellipse cx="430.44" cy="242.08" rx="4.7" ry="3.9" fill="none" stroke="#626262" stroke-width="1"/><ellipse cx="430.22" cy="241.73" rx="1.75" ry="1.5" fill="#0000ff"/><ellipse cx="439.52" cy="242.08" rx="4.7" ry="3.9" fill="none" stroke="#626262" stroke-width="1"/><ellipse cx="439.16" cy="242.01" rx="1.75" ry="1.5" fill="#0000ff"/><ellipse cx="448.60" cy="242.08" rx="4.7" ry="3.9" fill="none" stroke="#626262" stroke-width="1"/><ellipse cx="448.64" cy="242.00" rx="1.75" ry="1.5" fill="#0000ff"/><ellipse cx="457.68" cy="242.08" rx="4.7" ry="3.9" fill="none" stroke="#626262" stroke-width="1"/><ellipse cx="457.73" cy="241.91" rx="1.75" ry="1.5" fill="#0000ff"/><ellipse cx="466.76" cy="242.08" rx="4.7" ry="3.9" fill="none" stroke="#626262" stroke-width="1"/><ellipse cx="466.37" cy="242.22" rx="1.75" ry="1.5" fill="#0000ff"/><ellipse cx="475.84" cy="242.08" rx="4.7" ry="3.9" fill="none" stroke="#626262" stroke-width="1"/><ellipse cx="475.71" cy="242.07" rx="1.75" ry="1.5" fill="#0000ff"/><ellipse cx="484.92" cy="242.08" rx="4.7" ry="3.9" fill="none" stroke="#626262" stroke-width="1"/><ellipse cx="484.82" cy="241.90" rx="1.75" ry="1.5" fill="#0000ff"/><ellipse cx="494.00" cy="242.08" rx="4.7" ry="3.9" fill="none" stroke="#626262" stroke-width="1"/><ellipse cx="493.64" cy="241.92" rx="1.75" ry="1.5" fill="#0000ff"/><ellipse cx="503.08" cy="242.08" rx="4.7" ry="3.9" fill="none" stroke="#626262" stroke-width="1"/><ellipse cx="502.92" cy="241.77" rx="1.75" ry="1.5" fill="#0000ff"/><ellipse cx="512.16" cy="242.08" rx="4.7" ry="3.9" fill="none" stroke="#626262" stroke-width="1"/><ellipse cx="511.78" cy="242.06" rx="1.75" ry="1.5" fill="#0000ff"/><ellipse cx="521.24" cy="242.08" rx="4.7" ry="3.9" fill="none" stroke="#626262" stroke-width="1"/><ellipse cx="520.86" cy="242.38" rx="1.75" ry="1.5" fill="#0000ff"/><ellipse cx="530.32" cy="242.08" rx="4.7" ry="3.9" fill="none" stroke="#626262" stroke-width="1"/><ellipse cx="530.21" cy="242.03" rx="1.75" ry="1.5" fill="#0000ff"/><ellipse cx="539.40" cy="242.08" rx="4.7" ry="3.9" fill="none" stroke="#626262" stroke-width="1"/><ellipse cx="539.42" cy="241.70" rx="1.75" ry="1.5" fill="#0000ff"/><ellipse cx="403.20" cy="249.80" rx="4.7" ry="3.9" fill="none" stroke="#626262" stroke-width="1"/><ellipse cx="402.88" cy="250.03" rx="1.75" ry="1.5" fill="#0000ff"/><ellipse cx="412.28" cy="249.80" rx="4.7" ry="3.9" fill="none" stroke="#626262" stroke-width="1"/><ellipse cx="412.33" cy="249.79" rx="1.75" ry="1.5" fill="#0000ff"/><ellipse cx="421.36" cy="249.80" rx="4.7" ry="3.9" fill="none" stroke="#626262" stroke-width="1"/><ellipse cx="421.24" cy="250.00" rx="1.75" ry="1.5" fill="#0000ff"/><ellipse cx="430.44" cy="249.80" rx="4.7" ry="3.9" fill="none" stroke="#626262" stroke-width="1"/><ellipse cx="430.44" cy="250.03" rx="1.75" ry="1.5" fill="#0000ff"/><ellipse cx="439.52" cy="249.80" rx="4.7" ry="3.9" fill="none" stroke="#626262" stroke-width="1"/><ellipse cx="439.79" cy="250.12" rx="1.75" ry="1.5" fill="#0000ff"/><ellipse cx="448.60" cy="249.80" rx="4.7" ry="3.9" fill="none" stroke="#626262" stroke-width="1"/><ellipse cx="448.78" cy="249.94" rx="1.75" ry="1.5" fill="#0000ff"/><ellipse cx="457.68" cy="249.80" rx="4.7" ry="3.9" fill="none" stroke="#626262" stroke-width="1"/><ellipse cx="457.65" cy="249.83" rx="1.75" ry="1.5" fill="#0000ff"/><ellipse cx="466.76" cy="249.80" rx="4.7" ry="3.9" fill="none" stroke="#626262" stroke-width="1"/><ellipse cx="466.82" cy="249.82" rx="1.75" ry="1.5" fill="#0000ff"/><ellipse cx="475.84" cy="249.80" rx="4.7" ry="3.9" fill="none" stroke="#626262" stroke-width="1"/><ellipse cx="476.10" cy="250.09" rx="1.75" ry="1.5" fill="#0000ff"/><ellipse cx="484.92" cy="249.80" rx="4.7" ry="3.9" fill="none" stroke="#626262" stroke-width="1"/><ellipse cx="484.56" cy="250.00" rx="1.75" ry="1.5" fill="#0000ff"/><ellipse cx="494.00" cy="249.80" rx="4.7" ry="3.9" fill="none" stroke="#626262" stroke-width="1"/><ellipse cx="494.09" cy="249.88" rx="1.75" ry="1.5" fill="#0000ff"/><ellipse cx="503.08" cy="249.80" rx="4.7" ry="3.9" fill="none" stroke="#626262" stroke-width="1"/><ellipse cx="503.41" cy="249.44" rx="1.75" ry="1.5" fill="#0000ff"/><ellipse cx="512.16" cy="249.80" rx="4.7" ry="3.9" fill="none" stroke="#626262" stroke-width="1"/><ellipse cx="512.14" cy="249.70" rx="1.75" ry="1.5" fill="#0000ff"/><ellipse cx="521.24" cy="249.80" rx="4.7" ry="3.9" fill="none" stroke="#626262" stroke-width="1"/><ellipse cx="521.60" cy="249.53" rx="1.75" ry="1.5" fill="#0000ff"/><ellipse cx="530.32" cy="249.80" rx="4.7" ry="3.9" fill="none" stroke="#626262" stroke-width="1"/><ellipse cx="530.37" cy="249.52" rx="1.75" ry="1.5" fill="#0000ff"/><ellipse cx="539.40" cy="249.80" rx="4.7" ry="3.9" fill="none" stroke="#626262" stroke-width="1"/><ellipse cx="539.60" cy="249.79" rx="1.75" ry="1.5" fill="#0000ff"/><ellipse cx="403.20" cy="257.52" rx="4.7" ry="3.9" fill="none" stroke="#626262" stroke-width="1"/><ellipse cx="403.39" cy="257.37" rx="1.75" ry="1.5" fill="#0000ff"/><ellipse cx="412.28" cy="257.52" rx="4.7" ry="3.9" fill="none" stroke="#626262" stroke-width="1"/><ellipse cx="412.59" cy="257.13" rx="1.75" ry="1.5" fill="#0000ff"/><ellipse cx="421.36" cy="257.52" rx="4.7" ry="3.9" fill="none" stroke="#626262" stroke-width="1"/><ellipse cx="421.14" cy="257.71" rx="1.75" ry="1.5" fill="#0000ff"/><ellipse cx="430.44" cy="257.52" rx="4.7" ry="3.9" fill="none" stroke="#626262" stroke-width="1"/><ellipse cx="430.74" cy="257.74" rx="1.75" ry="1.5" fill="#0000ff"/><ellipse cx="439.52" cy="257.52" rx="4.7" ry="3.9" fill="none" stroke="#626262" stroke-width="1"/><ellipse cx="439.34" cy="257.18" rx="1.75" ry="1.5" fill="#0000ff"/><ellipse cx="448.60" cy="257.52" rx="4.7" ry="3.9" fill="none" stroke="#626262" stroke-width="1"/><ellipse cx="448.77" cy="257.71" rx="1.75" ry="1.5" fill="#0000ff"/><ellipse cx="457.68" cy="257.52" rx="4.7" ry="3.9" fill="none" stroke="#626262" stroke-width="1"/><ellipse cx="457.33" cy="257.87" rx="1.75" ry="1.5" fill="#0000ff"/><ellipse cx="466.76" cy="257.52" rx="4.7" ry="3.9" fill="none" stroke="#626262" stroke-width="1"/><ellipse cx="466.78" cy="257.15" rx="1.75" ry="1.5" fill="#0000ff"/><ellipse cx="475.84" cy="257.52" rx="4.7" ry="3.9" fill="none" stroke="#626262" stroke-width="1"/><ellipse cx="475.82" cy="257.39" rx="1.75" ry="1.5" fill="#0000ff"/><ellipse cx="484.92" cy="257.52" rx="4.7" ry="3.9" fill="none" stroke="#626262" stroke-width="1"/><ellipse cx="484.60" cy="257.83" rx="1.75" ry="1.5" fill="#0000ff"/><ellipse cx="494.00" cy="257.52" rx="4.7" ry="3.9" fill="none" stroke="#626262" stroke-width="1"/><ellipse cx="494.35" cy="257.22" rx="1.75" ry="1.5" fill="#0000ff"/><ellipse cx="503.08" cy="257.52" rx="4.7" ry="3.9" fill="none" stroke="#626262" stroke-width="1"/><ellipse cx="503.04" cy="257.34" rx="1.75" ry="1.5" fill="#0000ff"/><ellipse cx="512.16" cy="257.52" rx="4.7" ry="3.9" fill="none" stroke="#626262" stroke-width="1"/><ellipse cx="512.30" cy="257.21" rx="1.75" ry="1.5" fill="#0000ff"/><ellipse cx="521.24" cy="257.52" rx="4.7" ry="3.9" fill="none" stroke="#626262" stroke-width="1"/><ellipse cx="521.11" cy="257.45" rx="1.75" ry="1.5" fill="#0000ff"/><ellipse cx="530.32" cy="257.52" rx="4.7" ry="3.9" fill="none" stroke="#626262" stroke-width="1"/><ellipse cx="530.30" cy="257.47" rx="1.75" ry="1.5" fill="#0000ff"/><ellipse cx="539.40" cy="257.52" rx="4.7" ry="3.9" fill="none" stroke="#626262" stroke-width="1"/><ellipse cx="539.48" cy="257.87" rx="1.75" ry="1.5" fill="#0000ff"/><ellipse cx="403.20" cy="265.24" rx="4.7" ry="3.9" fill="none" stroke="#626262" stroke-width="1"/><ellipse cx="403.55" cy="265.57" rx="1.75" ry="1.5" fill="#0000ff"/><ellipse cx="412.28" cy="265.24" rx="4.7" ry="3.9" fill="none" stroke="#626262" stroke-width="1"/><ellipse cx="412.54" cy="265.02" rx="1.75" ry="1.5" fill="#0000ff"/><ellipse cx="421.36" cy="265.24" rx="4.7" ry="3.9" fill="none" stroke="#626262" stroke-width="1"/><ellipse cx="421.16" cy="265.21" rx="1.75" ry="1.5" fill="#0000ff"/><ellipse cx="430.44" cy="265.24" rx="4.7" ry="3.9" fill="none" stroke="#626262" stroke-width="1"/><ellipse cx="430.55" cy="265.33" rx="1.75" ry="1.5" fill="#0000ff"/><ellipse cx="439.52" cy="265.24" rx="4.7" ry="3.9" fill="none" stroke="#626262" stroke-width="1"/><ellipse cx="439.40" cy="265.63" rx="1.75" ry="1.5" fill="#0000ff"/><ellipse cx="448.60" cy="265.24" rx="4.7" ry="3.9" fill="none" stroke="#626262" stroke-width="1"/><ellipse cx="448.45" cy="264.86" rx="1.75" ry="1.5" fill="#0000ff"/><ellipse cx="457.68" cy="265.24" rx="4.7" ry="3.9" fill="none" stroke="#626262" stroke-width="1"/><ellipse cx="457.35" cy="265.01" rx="1.75" ry="1.5" fill="#0000ff"/><ellipse cx="466.76" cy="265.24" rx="4.7" ry="3.9" fill="none" stroke="#626262" stroke-width="1"/><ellipse cx="466.94" cy="265.51" rx="1.75" ry="1.5" fill="#0000ff"/><ellipse cx="475.84" cy="265.24" rx="4.7" ry="3.9" fill="none" stroke="#626262" stroke-width="1"/><ellipse cx="475.47" cy="265.03" rx="1.75" ry="1.5" fill="#0000ff"/><ellipse cx="484.92" cy="265.24" rx="4.7" ry="3.9" fill="none" stroke="#626262" stroke-width="1"/><ellipse cx="484.71" cy="265.47" rx="1.75" ry="1.5" fill="#0000ff"/><ellipse cx="494.00" cy="265.24" rx="4.7" ry="3.9" fill="none" stroke="#626262" stroke-width="1"/><ellipse cx="494.32" cy="265.05" rx="1.75" ry="1.5" fill="#0000ff"/><ellipse cx="503.08" cy="265.24" rx="4.7" ry="3.9" fill="none" stroke="#626262" stroke-width="1"/><ellipse cx="502.76" cy="265.61" rx="1.75" ry="1.5" fill="#0000ff"/><ellipse cx="512.16" cy="265.24" rx="4.7" ry="3.9" fill="none" stroke="#626262" stroke-width="1"/><ellipse cx="512.54" cy="265.41" rx="1.75" ry="1.5" fill="#0000ff"/><ellipse cx="521.24" cy="265.24" rx="4.7" ry="3.9" fill="none" stroke="#626262" stroke-width="1"/><ellipse cx="521.22" cy="265.44" rx="1.75" ry="1.5" fill="#0000ff"/><ellipse cx="530.32" cy="265.24" rx="4.7" ry="3.9" fill="none" stroke="#626262" stroke-width="1"/><ellipse cx="530.53" cy="265.25" rx="1.75" ry="1.5" fill="#0000ff"/><ellipse cx="539.40" cy="265.24" rx="4.7" ry="3.9" fill="none" stroke="#626262" stroke-width="1"/><ellipse cx="539.22" cy="265.26" rx="1.75" ry="1.5" fill="#0000ff"/><ellipse cx="412.28" cy="272.96" rx="4.7" ry="3.9" fill="none" stroke="#626262" stroke-width="1"/><ellipse cx="412.41" cy="272.82" rx="1.75" ry="1.5" fill="#0000ff"/><ellipse cx="421.36" cy="272.96" rx="4.7" ry="3.9" fill="none" stroke="#626262" stroke-width="1"/><ellipse cx="421.47" cy="272.68" rx="1.75" ry="1.5" fill="#0000ff"/><ellipse cx="430.44" cy="272.96" rx="4.7" ry="3.9" fill="none" stroke="#626262" stroke-width="1"/><ellipse cx="430.82" cy="272.73" rx="1.75" ry="1.5" fill="#0000ff"/><ellipse cx="439.52" cy="272.96" rx="4.7" ry="3.9" fill="none" stroke="#626262" stroke-width="1"/><ellipse cx="439.30" cy="273.33" rx="1.75" ry="1.5" fill="#0000ff"/><ellipse cx="448.60" cy="272.96" rx="4.7" ry="3.9" fill="none" stroke="#626262" stroke-width="1"/><ellipse cx="448.96" cy="273.30" rx="1.75" ry="1.5" fill="#0000ff"/><ellipse cx="457.68" cy="272.96" rx="4.7" ry="3.9" fill="none" stroke="#626262" stroke-width="1"/><ellipse cx="457.95" cy="273.24" rx="1.75" ry="1.5" fill="#0000ff"/><ellipse cx="466.76" cy="272.96" rx="4.7" ry="3.9" fill="none" stroke="#626262" stroke-width="1"/><ellipse cx="467.02" cy="273.01" rx="1.75" ry="1.5" fill="#0000ff"/><ellipse cx="475.84" cy="272.96" rx="4.7" ry="3.9" fill="none" stroke="#626262" stroke-width="1"/><ellipse cx="475.50" cy="273.15" rx="1.75" ry="1.5" fill="#0000ff"/><ellipse cx="484.92" cy="272.96" rx="4.7" ry="3.9" fill="none" stroke="#626262" stroke-width="1"/><ellipse cx="485.19" cy="273.23" rx="1.75" ry="1.5" fill="#0000ff"/><ellipse cx="494.00" cy="272.96" rx="4.7" ry="3.9" fill="none" stroke="#626262" stroke-width="1"/><ellipse cx="493.63" cy="272.61" rx="1.75" ry="1.5" fill="#0000ff"/><ellipse cx="503.08" cy="272.96" rx="4.7" ry="3.9" fill="none" stroke="#626262" stroke-width="1"/><ellipse cx="503.26" cy="272.95" rx="1.75" ry="1.5" fill="#0000ff"/><ellipse cx="512.16" cy="272.96" rx="4.7" ry="3.9" fill="none" stroke="#626262" stroke-width="1"/><ellipse cx="512.47" cy="273.35" rx="1.75" ry="1.5" fill="#0000ff"/><ellipse cx="521.24" cy="272.96" rx="4.7" ry="3.9" fill="none" stroke="#626262" stroke-width="1"/><ellipse cx="521.20" cy="273.10" rx="1.75" ry="1.5" fill="#0000ff"/><ellipse cx="530.32" cy="272.96" rx="4.7" ry="3.9" fill="none" stroke="#626262" stroke-width="1"/><ellipse cx="530.45" cy="273.11" rx="1.75" ry="1.5" fill="#0000ff"/><ellipse cx="539.40" cy="272.96" rx="4.7" ry="3.9" fill="none" stroke="#626262" stroke-width="1"/><ellipse cx="539.29" cy="273.07" rx="1.75" ry="1.5" fill="#0000ff"/><ellipse cx="403.20" cy="280.68" rx="4.7" ry="3.9" fill="none" stroke="#626262" stroke-width="1"/><ellipse cx="402.85" cy="281.00" rx="1.75" ry="1.5" fill="#0000ff"/><ellipse cx="412.28" cy="280.68" rx="4.7" ry="3.9" fill="none" stroke="#626262" stroke-width="1"/><ellipse cx="412.46" cy="280.92" rx="1.75" ry="1.5" fill="#0000ff"/><ellipse cx="421.36" cy="280.68" rx="4.7" ry="3.9" fill="none" stroke="#626262" stroke-width="1"/><ellipse cx="421.33" cy="280.44" rx="1.75" ry="1.5" fill="#0000ff"/><ellipse cx="430.44" cy="280.68" rx="4.7" ry="3.9" fill="none" stroke="#626262" stroke-width="1"/><ellipse cx="430.40" cy="280.82" rx="1.75" ry="1.5" fill="#0000ff"/><ellipse cx="439.52" cy="280.68" rx="4.7" ry="3.9" fill="none" stroke="#626262" stroke-width="1"/><ellipse cx="439.56" cy="280.37" rx="1.75" ry="1.5" fill="#0000ff"/><ellipse cx="448.60" cy="280.68" rx="4.7" ry="3.9" fill="none" stroke="#626262" stroke-width="1"/><ellipse cx="448.20" cy="280.60" rx="1.75" ry="1.5" fill="#0000ff"/><ellipse cx="457.68" cy="280.68" rx="4.7" ry="3.9" fill="none" stroke="#626262" stroke-width="1"/><ellipse cx="457.48" cy="280.46" rx="1.75" ry="1.5" fill="#0000ff"/><ellipse cx="466.76" cy="280.68" rx="4.7" ry="3.9" fill="none" stroke="#626262" stroke-width="1"/><ellipse cx="466.54" cy="280.61" rx="1.75" ry="1.5" fill="#0000ff"/><ellipse cx="475.84" cy="280.68" rx="4.7" ry="3.9" fill="none" stroke="#626262" stroke-width="1"/><ellipse cx="476.00" cy="281.01" rx="1.75" ry="1.5" fill="#0000ff"/><ellipse cx="484.92" cy="280.68" rx="4.7" ry="3.9" fill="none" stroke="#626262" stroke-width="1"/><ellipse cx="485.06" cy="280.30" rx="1.75" ry="1.5" fill="#0000ff"/><ellipse cx="494.00" cy="280.68" rx="4.7" ry="3.9" fill="none" stroke="#626262" stroke-width="1"/><ellipse cx="494.29" cy="280.77" rx="1.75" ry="1.5" fill="#0000ff"/><ellipse cx="503.08" cy="280.68" rx="4.7" ry="3.9" fill="none" stroke="#626262" stroke-width="1"/><ellipse cx="503.27" cy="280.77" rx="1.75" ry="1.5" fill="#0000ff"/><ellipse cx="512.16" cy="280.68" rx="4.7" ry="3.9" fill="none" stroke="#626262" stroke-width="1"/><ellipse cx="512.04" cy="280.55" rx="1.75" ry="1.5" fill="#0000ff"/><ellipse cx="521.24" cy="280.68" rx="4.7" ry="3.9" fill="none" stroke="#626262" stroke-width="1"/><ellipse cx="520.90" cy="280.81" rx="1.75" ry="1.5" fill="#0000ff"/><ellipse cx="530.32" cy="280.68" rx="4.7" ry="3.9" fill="none" stroke="#626262" stroke-width="1"/><ellipse cx="529.96" cy="280.82" rx="1.75" ry="1.5" fill="#0000ff"/><ellipse cx="539.40" cy="280.68" rx="4.7" ry="3.9" fill="none" stroke="#626262" stroke-width="1"/><ellipse cx="539.73" cy="280.81" rx="1.75" ry="1.5" fill="#0000ff"/><ellipse cx="403.20" cy="288.40" rx="4.7" ry="3.9" fill="none" stroke="#626262" stroke-width="1"/><ellipse cx="403.28" cy="288.65" rx="1.75" ry="1.5" fill="#0000ff"/><ellipse cx="412.28" cy="288.40" rx="4.7" ry="3.9" fill="none" stroke="#626262" stroke-width="1"/><ellipse cx="412.65" cy="288.65" rx="1.75" ry="1.5" fill="#0000ff"/><ellipse cx="421.36" cy="288.40" rx="4.7" ry="3.9" fill="none" stroke="#626262" stroke-width="1"/><ellipse cx="421.75" cy="288.37" rx="1.75" ry="1.5" fill="#0000ff"/><ellipse cx="430.44" cy="288.40" rx="4.7" ry="3.9" fill="none" stroke="#626262" stroke-width="1"/><ellipse cx="430.05" cy="288.49" rx="1.75" ry="1.5" fill="#0000ff"/><ellipse cx="439.52" cy="288.40" rx="4.7" ry="3.9" fill="none" stroke="#626262" stroke-width="1"/><ellipse cx="439.63" cy="288.69" rx="1.75" ry="1.5" fill="#0000ff"/><ellipse cx="448.60" cy="288.40" rx="4.7" ry="3.9" fill="none" stroke="#626262" stroke-width="1"/><ellipse cx="448.69" cy="288.29" rx="1.75" ry="1.5" fill="#0000ff"/><ellipse cx="457.68" cy="288.40" rx="4.7" ry="3.9" fill="none" stroke="#626262" stroke-width="1"/><ellipse cx="457.28" cy="288.66" rx="1.75" ry="1.5" fill="#0000ff"/><ellipse cx="466.76" cy="288.40" rx="4.7" ry="3.9" fill="none" stroke="#626262" stroke-width="1"/><ellipse cx="466.86" cy="288.79" rx="1.75" ry="1.5" fill="#0000ff"/><ellipse cx="475.84" cy="288.40" rx="4.7" ry="3.9" fill="none" stroke="#626262" stroke-width="1"/><ellipse cx="475.91" cy="288.68" rx="1.75" ry="1.5" fill="#0000ff"/><ellipse cx="484.92" cy="288.40" rx="4.7" ry="3.9" fill="none" stroke="#626262" stroke-width="1"/><ellipse cx="485.14" cy="288.79" rx="1.75" ry="1.5" fill="#0000ff"/><ellipse cx="494.00" cy="288.40" rx="4.7" ry="3.9" fill="none" stroke="#626262" stroke-width="1"/><ellipse cx="493.97" cy="288.72" rx="1.75" ry="1.5" fill="#0000ff"/><ellipse cx="503.08" cy="288.40" rx="4.7" ry="3.9" fill="none" stroke="#626262" stroke-width="1"/><ellipse cx="503.00" cy="288.01" rx="1.75" ry="1.5" fill="#0000ff"/><ellipse cx="512.16" cy="288.40" rx="4.7" ry="3.9" fill="none" stroke="#626262" stroke-width="1"/><ellipse cx="512.02" cy="288.28" rx="1.75" ry="1.5" fill="#0000ff"/><ellipse cx="521.24" cy="288.40" rx="4.7" ry="3.9" fill="none" stroke="#626262" stroke-width="1"/><ellipse cx="521.63" cy="288.32" rx="1.75" ry="1.5" fill="#0000ff"/><ellipse cx="530.32" cy="288.40" rx="4.7" ry="3.9" fill="none" stroke="#626262" stroke-width="1"/><ellipse cx="530.14" cy="288.55" rx="1.75" ry="1.5" fill="#0000ff"/><ellipse cx="539.40" cy="288.40" rx="4.7" ry="3.9" fill="none" stroke="#626262" stroke-width="1"/><ellipse cx="539.08" cy="288.24" rx="1.75" ry="1.5" fill="#0000ff"/>
  <!-- plot 2 grid -->
  <path d="M688.20 172.5V305.0M723.48 172.5V305.0M758.76 172.5V305.0M794.04 172.5V305.0M829.32 172.5V305.0M864.60 172.5V305.0M899.88 172.5V305.0M935.16 172.5V305.0M970.44 172.5V305.0M1005.72 172.5V305.0M1041.00 172.5V305.0M688.2 172.50H1041.0M688.2 185.75H1041.0M688.2 199.00H1041.0M688.2 212.25H1041.0M688.2 225.50H1041.0M688.2 238.75H1041.0M688.2 252.00H1041.0M688.2 265.25H1041.0M688.2 278.50H1041.0M688.2 291.75H1041.0M688.2 305.00H1041.0" stroke="#767676" stroke-width="1" fill="none"/>
  <path d="M688.5 199.0V241.8M689.5 199.1V279.3M690.5 232.4V274.7M691.5 232.2V243.2M692.5 199.1V243.9M693.5 199.0V248.2M694.5 198.6V250.9M695.5 199.3V241.9M696.5 199.1V273.5M697.5 235.4V241.8M698.5 233.2V266.3M699.5 186.7V235.6M700.5 187.0V242.1M701.5 187.5V240.8M702.5 186.7V239.0M703.5 186.7V231.9M704.5 186.7V248.0M705.5 186.8V236.0M706.5 187.3V230.6M707.5 187.0V229.1M708.5 187.4V231.5M709.5 187.0V237.8M710.5 187.6V229.0M711.5 186.9V228.3M712.5 187.2V230.4M713.5 187.1V236.4M714.5 187.5V228.6M715.5 187.4V228.8M716.5 187.5V231.8M717.5 187.2V249.6M718.5 186.8V234.3M719.5 187.2V228.7M720.5 186.7V230.2M721.5 187.2V231.7M722.5 186.6V241.8M723.5 187.0V233.2M724.5 187.5V237.9M725.5 187.2V249.1M726.5 187.3V232.2M727.5 187.1V234.9M728.5 186.7V238.6M729.5 187.3V239.1M730.5 187.0V240.1M731.5 187.0V239.8M732.5 187.2V230.3M733.5 186.7V240.9M734.5 187.3V230.9M735.5 187.0V232.8M736.5 186.6V236.3M737.5 187.3V237.5M738.5 186.9V229.2M739.5 186.8V231.6M740.5 187.0V234.9M741.5 186.8V231.2M742.5 187.5V230.3M743.5 186.7V239.5M744.5 187.3V234.5M745.5 187.1V228.9M746.5 187.2V234.8M747.5 187.6V248.7M748.5 186.6V237.1M749.5 187.4V228.5M750.5 186.6V234.1M751.5 186.6V236.0M752.5 187.3V240.6M753.5 186.8V244.7M754.5 187.3V229.1M755.5 187.3V237.5M756.5 187.0V240.2M757.5 187.5V233.2M758.5 187.2V235.4M759.5 187.5V240.5M760.5 187.3V230.9M761.5 187.2V233.9M762.5 187.6V236.8M763.5 186.9V239.7M764.5 235.1V276.3M765.5 198.7V272.9M766.5 199.2V252.0M767.5 199.2V254.2M768.5 199.4V243.4M769.5 198.8V277.9M770.5 234.6V280.0M771.5 233.2V273.2M772.5 199.3V241.5M773.5 199.4V240.8M774.5 198.8V242.1M775.5 199.1V242.1M776.5 198.9V269.8M777.5 199.2V278.2M778.5 235.8V272.2M779.5 187.5V229.9M780.5 187.0V240.1M781.5 186.9V230.5M782.5 186.7V232.2M783.5 186.8V234.9M784.5 187.2V230.9M785.5 187.1V228.8M786.5 187.0V229.7M787.5 186.8V230.5M788.5 187.1V237.5M789.5 186.8V239.3M790.5 186.9V231.7M791.5 187.6V233.2M792.5 187.3V228.4M793.5 187.0V233.1M794.5 187.3V228.8M795.5 187.5V233.0M796.5 187.4V238.2M797.5 186.7V228.1M798.5 187.1V233.3M799.5 186.8V240.9M800.5 186.7V231.8M801.5 187.4V229.9M802.5 187.0V232.1M803.5 187.4V229.8M804.5 187.0V228.7M805.5 186.6V239.2M806.5 187.5V235.6M807.5 187.1V239.2M808.5 187.5V239.0M809.5 187.0V239.9M810.5 187.4V235.7M811.5 186.7V243.6M812.5 187.2V234.1M813.5 187.3V230.6M814.5 187.1V232.0M815.5 187.3V246.2M816.5 187.3V242.0M817.5 187.0V229.0M818.5 187.2V240.7M819.5 187.6V246.0M820.5 187.4V231.7M821.5 187.1V230.0M822.5 186.7V235.8M823.5 187.2V229.1M824.5 187.2V230.9M825.5 186.6V228.2M826.5 187.4V231.6M827.5 186.7V249.1M828.5 187.0V240.8M829.5 187.1V238.5M830.5 187.6V237.4M831.5 187.2V245.3M832.5 186.7V230.7M833.5 186.9V235.8M834.5 187.1V240.6M835.5 186.8V231.6M836.5 187.2V229.1M837.5 187.2V237.7M838.5 186.8V231.9M839.5 187.5V228.2M840.5 187.0V232.9M841.5 186.7V230.7M842.5 187.2V229.9M843.5 186.9V241.2M844.5 187.4V238.9M845.5 233.5V279.2M846.5 199.0V271.5M847.5 198.9V243.0M848.5 198.7V258.5M849.5 199.1V271.8M850.5 198.8V281.7M851.5 234.9V274.7M852.5 233.4V249.7M853.5 198.7V242.9M854.5 199.3V242.8M855.5 199.0V243.8M856.5 198.9V243.2M857.5 198.9V252.3M858.5 232.8V276.6M859.5 235.3V268.2M860.5 187.2V231.0M861.5 186.9V230.1M862.5 187.2V237.9M863.5 186.7V239.1M864.5 186.7V240.1M865.5 187.2V231.0M866.5 186.8V231.1M867.5 187.4V229.4M868.5 187.3V236.8M869.5 187.3V235.7M870.5 187.3V239.3M871.5 187.5V237.8M872.5 187.3V235.8M873.5 186.7V240.9M874.5 186.8V229.7M875.5 187.6V229.2M876.5 187.2V244.6M877.5 187.2V232.3M878.5 186.8V228.9M879.5 187.2V228.7M880.5 186.8V234.8M881.5 187.4V234.3M882.5 187.5V230.2M883.5 187.1V228.2M884.5 187.4V230.1M885.5 186.9V237.9M886.5 186.6V235.3M887.5 187.3V233.4M888.5 186.9V231.5M889.5 187.2V234.4M890.5 186.8V232.0M891.5 187.4V232.7M892.5 187.3V229.9M893.5 187.6V239.7M894.5 187.4V231.7M895.5 187.4V230.2M896.5 186.8V234.8M897.5 186.7V229.9M898.5 187.0V233.0M899.5 187.1V239.5M900.5 186.6V230.8M901.5 187.2V232.1M902.5 187.4V230.5M903.5 187.0V234.7M904.5 187.0V234.3M905.5 187.3V231.8M906.5 187.3V231.3M907.5 186.7V230.7M908.5 186.8V231.3M909.5 186.7V228.6M910.5 187.0V231.7M911.5 187.1V238.9M912.5 187.0V244.0M913.5 187.3V239.1M914.5 187.2V229.3M915.5 187.3V229.5M916.5 187.4V237.5M917.5 187.4V236.9M918.5 187.1V230.9M919.5 187.1V239.5M920.5 187.5V233.8M921.5 186.8V238.3M922.5 187.5V229.9M923.5 187.6V231.6M924.5 187.2V234.4M925.5 232.5V277.8M926.5 199.3V254.9M927.5 198.7V240.7M928.5 199.4V259.8M929.5 199.1V242.6M930.5 199.2V275.6M931.5 232.6V279.7M932.5 234.1V272.1M933.5 198.9V241.1M934.5 198.7V256.1M935.5 199.0V243.8M936.5 199.2V241.6M937.5 199.4V268.9M938.5 198.9V279.4M939.5 234.1V273.6M940.5 187.0V247.3M941.5 187.5V237.4M942.5 186.9V232.6M943.5 187.0V246.9M944.5 187.1V229.2M945.5 186.8V231.6M946.5 187.3V235.8M947.5 186.8V237.1M948.5 186.7V233.1M949.5 187.6V229.0M950.5 186.9V231.6M951.5 187.0V240.3M952.5 187.5V230.0M953.5 187.6V233.9M954.5 187.5V233.8M955.5 187.0V233.5M956.5 187.6V230.5M957.5 187.5V228.4M958.5 186.9V239.8M959.5 186.7V240.4M960.5 186.7V229.2M961.5 186.8V228.9M962.5 187.4V230.6M963.5 187.2V229.2M964.5 187.3V230.6M965.5 187.6V230.1M966.5 186.6V234.6M967.5 187.4V229.1M968.5 186.8V230.2M969.5 187.5V232.3M970.5 187.4V231.7M971.5 186.8V237.8M972.5 187.3V236.7M973.5 187.4V236.7M974.5 186.8V233.5M975.5 186.8V231.1M976.5 187.4V230.0M977.5 187.2V232.3M978.5 187.3V239.9M979.5 186.8V230.0M980.5 187.0V249.1M981.5 187.2V239.1M982.5 186.7V228.2M983.5 187.2V234.4M984.5 186.7V233.5M985.5 186.8V239.5M986.5 186.7V229.5M987.5 187.6V230.0M988.5 187.6V229.8M989.5 186.6V231.6M990.5 187.0V240.3M991.5 187.6V238.6M992.5 186.9V234.2M993.5 187.5V229.3M994.5 187.2V229.6M995.5 186.7V230.8M996.5 187.2V236.2M997.5 187.4V231.1M998.5 186.9V230.2M999.5 186.8V229.9M1000.5 187.0V238.1M1001.5 186.8V228.3M1002.5 187.0V228.1M1003.5 186.9V231.7M1004.5 186.9V228.6M1005.5 187.0V238.5M1006.5 232.3V279.4M1007.5 199.0V268.8M1008.5 198.8V240.2M1009.5 198.6V255.1M1010.5 198.7V271.3M1011.5 199.1V279.6M1012.5 234.9V275.2M1013.5 235.5V241.6M1014.5 198.8V252.1M1015.5 199.1V255.6M1016.5 198.8V243.2M1017.5 198.8V242.7M1018.5 198.8V242.8M1019.5 233.6V275.4M1020.5 234.0V266.5M1021.5 186.9V229.6M1022.5 186.8V234.2M1023.5 186.9V228.6M1024.5 187.3V243.9M1025.5 187.0V245.0M1026.5 187.2V234.9M1027.5 186.6V231.6M1028.5 186.9V233.7M1029.5 187.2V235.3M1030.5 187.5V237.6M1031.5 187.0V229.1M1032.5 187.5V241.4M1033.5 187.1V229.4M1034.5 186.7V228.9M1035.5 186.8V230.2M1036.5 186.8V237.9M1037.5 187.2V239.5M1038.5 186.9V231.5M1039.5 187.3V238.2M1040.5 187.4V230.5" stroke="#ffff00" stroke-width="1.02" fill="none"/>
  <!-- plot 3 grid -->
  <path d="M291.60 369.6V487.2M326.86 369.6V487.2M362.12 369.6V487.2M397.38 369.6V487.2M432.64 369.6V487.2M467.90 369.6V487.2M503.16 369.6V487.2M538.42 369.6V487.2M573.68 369.6V487.2M608.94 369.6V487.2M644.20 369.6V487.2M291.6 369.60H644.2M291.6 381.36H644.2M291.6 393.12H644.2M291.6 404.88H644.2M291.6 416.64H644.2M291.6 428.40H644.2M291.6 440.16H644.2M291.6 451.92H644.2M291.6 463.68H644.2M291.6 475.44H644.2M291.6 487.20H644.2" stroke="#767676" stroke-width="1" fill="none"/>
  <path d="M291.5 433.0V468.0M292.5 428.6V468.0M293.5 424.2V446.8M294.5 422.8V457.8M295.5 422.0V447.8M296.5 421.3V456.4M297.5 420.7V447.9M298.5 420.0V445.2M299.5 419.4V451.9M300.5 418.8V446.5M301.5 418.2V446.5M302.5 417.7V452.8M303.5 417.1V453.1M304.5 416.6V447.9M305.5 416.1V448.7M306.5 415.5V444.5M307.5 415.0V447.2M308.5 414.5V451.9M309.5 414.0V459.1M310.5 413.5V441.3M311.5 413.1V454.8M312.5 412.6V440.7M313.5 412.1V448.0M314.5 411.6V452.4M315.5 411.2V442.3M316.5 410.7V447.4M317.5 410.3V451.3M318.5 409.8V439.4M319.5 409.4V440.7M320.5 408.9V438.6M321.5 408.5V440.7M322.5 408.1V439.9M323.5 407.6V456.8M324.5 407.2V437.8M325.5 406.8V451.2M326.5 382.8V422.7M327.5 382.0V424.9M328.5 382.8V427.9M329.5 382.6V415.1M330.5 382.0V418.8M331.5 381.9V433.3M332.5 382.7V422.6M333.5 382.7V419.9M334.5 382.6V433.8M335.5 382.3V418.3M336.5 382.5V416.4M337.5 382.0V418.7M338.5 382.4V420.6M339.5 382.3V419.1M340.5 382.2V427.6M341.5 382.2V420.0M342.5 382.9V417.0M343.5 382.2V427.5M344.5 382.3V420.3M345.5 382.5V418.1M346.5 382.5V424.1M347.5 382.6V425.0M348.5 382.1V424.2M349.5 382.5V424.3M350.5 382.1V427.9M351.5 382.6V422.6M352.5 382.9V421.1M353.5 382.8V426.2M354.5 382.0V425.4M355.5 382.4V426.8M356.5 382.5V417.8M357.5 382.1V426.7M358.5 382.8V420.4M359.5 381.9V419.3M360.5 382.1V419.2M361.5 382.0V420.9M362.5 382.6V440.1M363.5 382.2V421.5M364.5 382.1V418.5M365.5 382.0V424.5M366.5 382.9V425.6M367.5 382.3V418.2M368.5 382.3V423.6M369.5 382.6V417.9M370.5 382.2V425.1M371.5 382.3V424.4M372.5 382.3V417.2M373.5 382.6V421.2M374.5 382.8V417.1M375.5 382.8V423.9M376.5 382.0V416.9M377.5 382.2V434.3M378.5 382.3V421.8M379.5 382.9V427.9M380.5 382.5V432.6M381.5 382.6V419.9M382.5 382.0V418.7M383.5 382.5V425.7M384.5 382.6V446.3M385.5 382.8V419.2M386.5 382.4V418.9M387.5 382.0V420.2M388.5 382.2V421.2M389.5 382.1V424.0M390.5 382.0V420.4M391.5 382.3V426.8M392.5 381.9V419.1M393.5 382.1V419.3M394.5 382.9V432.2M395.5 382.2V419.6M396.5 382.6V427.5M397.5 382.8V416.5M398.5 382.3V423.3M399.5 382.4V433.3M400.5 382.3V415.5M401.5 382.4V440.9M402.5 382.9V418.0M403.5 382.5V416.5M404.5 382.2V423.6M405.5 382.0V416.4M406.5 382.8V421.6M407.5 382.9V422.0M408.5 382.7V419.5M409.5 382.5V447.2M410.5 382.7V419.1M411.5 382.6V427.3M412.5 382.3V422.4M413.5 382.0V418.7M414.5 382.7V423.9M415.5 382.2V424.0M416.5 382.3V426.6M417.5 382.4V417.2M418.5 382.8V425.2M419.5 382.0V420.5M420.5 382.2V416.7M421.5 382.3V426.6M422.5 382.4V422.0M423.5 382.2V424.2M424.5 382.7V418.6M425.5 382.5V427.2M426.5 382.1V419.9M427.5 381.9V424.1M428.5 382.1V425.9M429.5 382.7V416.0M430.5 382.0V424.2M431.5 382.6V419.8M432.5 382.8V442.4M433.5 382.2V416.3M434.5 382.2V416.4M435.5 382.1V426.7M436.5 382.6V424.9M437.5 382.2V419.7M438.5 382.1V422.3M439.5 382.4V422.1M440.5 382.0V424.9M441.5 382.0V420.1M442.5 382.8V428.3M443.5 382.9V426.7M444.5 382.0V420.7M445.5 382.4V418.5M446.5 382.0V424.0M447.5 382.0V416.7M448.5 382.9V427.3M449.5 381.9V424.3M450.5 382.5V419.8M451.5 381.9V436.4M452.5 382.7V423.7M453.5 382.7V415.3M454.5 382.7V445.2M455.5 382.2V423.7M456.5 382.4V419.4M457.5 382.2V426.1M458.5 382.6V417.6M459.5 382.1V416.5M460.5 382.6V423.9M461.5 382.1V417.1M462.5 382.3V427.9M463.5 382.7V422.0M464.5 382.2V425.7M465.5 381.9V437.1M466.5 382.1V427.6M467.5 382.8V418.6M468.5 382.0V426.9M469.5 382.4V415.6M470.5 382.0V431.1M471.5 382.0V423.9M472.5 382.4V419.7M473.5 382.2V427.3M474.5 382.2V421.6M475.5 382.4V426.6M476.5 382.8V419.2M477.5 382.0V415.9M478.5 381.9V419.0M479.5 382.4V415.1M480.5 382.2V422.3M481.5 382.2V419.4M482.5 382.4V422.0M483.5 382.8V426.9M484.5 382.9V415.9M485.5 382.5V419.7M486.5 382.6V417.8M487.5 382.4V415.0M488.5 382.5V423.2M489.5 382.4V427.7M490.5 382.0V421.1M491.5 382.2V423.5M492.5 382.8V423.3M493.5 382.4V416.0M494.5 382.7V427.3M495.5 382.6V426.2M496.5 382.2V433.1M497.5 382.7V427.2M498.5 382.0V420.0M499.5 382.2V418.5M500.5 382.5V436.7M501.5 382.7V424.1M502.5 382.4V429.6M503.5 382.1V426.0M504.5 382.2V415.9M505.5 382.8V419.6M506.5 382.9V427.7M507.5 382.2V436.6M508.5 382.4V421.2M509.5 382.1V431.6M510.5 382.8V422.7M511.5 382.4V420.1M512.5 382.7V424.8M513.5 382.2V428.0M514.5 382.7V415.8M515.5 382.6V421.9M516.5 382.6V422.9M517.5 382.9V419.5M518.5 382.6V420.2M519.5 382.6V424.8M520.5 381.9V436.9M521.5 382.3V420.0M522.5 382.4V421.8M523.5 382.2V419.3M524.5 382.3V421.3M525.5 382.3V417.2M526.5 382.5V421.7M527.5 382.4V423.1M528.5 382.9V422.6M529.5 382.2V427.5M530.5 382.3V421.0M531.5 382.9V432.2M532.5 382.2V421.0M533.5 382.1V419.5M534.5 382.7V418.0M535.5 382.6V421.3M536.5 382.4V420.2M537.5 382.6V421.5M538.5 382.4V418.1M539.5 382.2V422.8M540.5 382.4V427.9M541.5 382.3V419.7M542.5 382.6V422.4M543.5 382.4V416.9M544.5 382.2V427.4M545.5 382.0V419.0M546.5 382.4V419.3M547.5 382.1V425.3M548.5 382.1V421.8M549.5 382.5V427.9M550.5 382.5V419.8M551.5 382.3V427.2M552.5 382.3V420.9M553.5 382.1V416.1M554.5 382.6V419.2M555.5 382.0V416.8M556.5 382.8V435.0M557.5 382.2V425.3M558.5 382.2V422.2M559.5 382.2V415.1M560.5 382.2V419.2M561.5 382.2V425.8M562.5 382.6V422.7M563.5 382.4V423.8M564.5 382.1V436.0M565.5 382.2V419.3M566.5 382.6V423.1M567.5 382.8V427.3M568.5 382.1V423.9M569.5 382.8V427.9M570.5 381.9V416.9M571.5 382.5V422.9M572.5 382.5V417.3M573.5 382.1V423.9M574.5 382.5V416.1M575.5 382.0V422.0M576.5 382.0V421.4M577.5 382.7V415.2M578.5 382.1V415.8M579.5 382.2V419.1M580.5 382.5V419.4M581.5 382.7V418.6M582.5 382.9V416.4M583.5 382.0V416.2M584.5 382.6V425.0M585.5 382.6V419.5M586.5 382.4V415.1M587.5 382.2V418.0M588.5 382.4V425.9M589.5 382.1V419.7M590.5 382.1V426.6M591.5 382.7V419.5M592.5 382.1V415.1M593.5 382.0V419.2M594.5 381.9V416.4M595.5 382.1V420.5M596.5 382.3V417.8M597.5 382.4V418.1M598.5 381.9V424.3M599.5 382.8V416.9M600.5 382.6V419.4M601.5 382.7V425.3M602.5 382.3V425.9M603.5 382.6V422.3M604.5 382.8V427.0M605.5 382.6V420.3M606.5 382.0V419.6M607.5 382.2V420.7M608.5 382.9V416.8M609.5 406.7V443.1M610.5 407.1V449.4M611.5 407.5V438.7M612.5 408.0V442.5M613.5 408.4V440.1M614.5 408.8V451.8M615.5 409.2V440.3M616.5 409.7V447.5M617.5 410.1V442.3M618.5 410.6V441.9M619.5 411.0V441.3M620.5 411.5V449.7M621.5 411.9V452.5M622.5 412.4V452.7M623.5 412.8V453.3M624.5 413.3V454.8M625.5 413.8V457.5M626.5 414.3V443.9M627.5 414.8V442.2M628.5 415.3V454.8M629.5 415.8V454.9M630.5 416.3V449.4M631.5 416.8V458.6M632.5 417.4V445.4M633.5 417.9V447.9M634.5 418.5V454.3M635.5 419.0V450.7M636.5 419.6V456.1M637.5 420.2V453.1M638.5 420.9V452.1M639.5 421.5V462.2M640.5 422.2V445.7M641.5 423.0V456.9M642.5 425.2V468.0M643.5 429.6V468.0" stroke="#ffff00" stroke-width="1.02" fill="none"/>

  <!-- tables -->
  <g>
    <rect x="648.4" y="352.1" width="136.4" height="91.4" fill="#3b3b3b"/>
    <rect x="784.8" y="352.1" width="93.1" height="91.4" fill="#000" stroke="#2e2e2e" stroke-width="1"/>
    <rect x="648.4" y="443.5" width="93.3" height="31" fill="#3b3b3b"/>
    <rect x="741.7" y="443.5" width="93" height="31" fill="#000" stroke="#2e2e2e" stroke-width="1"/>
    <g stroke="#262626" stroke-width="1.2">
      <path d="M648.4 367.1H878M648.4 382.5H878M648.4 398.1H878M648.4 413.5H878M648.4 428.9H878M648.4 443.5H878"/>
      <path d="M648.4 458.9H834.7M648.4 474.5H834.7"/>
    </g>
  </g>

  <!-- selected panel blue border -->
  <rect x="249.1" y="126.4" width="396.7" height="196.8" fill="none" stroke="#3cb8ee" stroke-width="2.1"/>
</svg>

<div class="t" style="left:252.40px;top:68.82px;font-size:16px;transform:scaleX(1.1542);color:#ffffff;font-weight:bold;-webkit-text-stroke:0;">KEYSIGHT</div>
<div class="t" style="left:353.40px;top:69.35px;font-size:11.5px;transform:scaleX(1.0994);color:#e6e6e6;">Input: RF</div>
<div class="t" style="left:353.40px;top:83.05px;font-size:11.5px;transform:scaleX(1.1024);color:#e6e6e6;">Coupling: AC</div>
<div class="t" style="left:353.40px;top:96.85px;font-size:11.5px;transform:scaleX(1.1170);color:#f2b318;">Align: Off</div>
<div class="t" style="left:469.30px;top:69.35px;font-size:11.5px;transform:scaleX(1.1038);color:#e6e6e6;">Input Z: 50 Ω</div>
<div class="t" style="left:469.30px;top:83.05px;font-size:11.5px;transform:scaleX(1.1206);color:#e6e6e6;">Corrections: Off</div>
<div class="t" style="left:469.30px;top:96.85px;font-size:11.5px;transform:scaleX(1.1244);color:#e6e6e6;">Freq Ref: Ext (S)</div>
<div class="t" style="left:469.30px;top:110.55px;font-size:11.5px;transform:scaleX(1.1232);color:#e6e6e6;">NFE: Off</div>
<div class="t" style="left:584.90px;top:69.35px;font-size:11.5px;transform:scaleX(1.1272);color:#e6e6e6;">Atten: 10 dB (e0)</div>
<div class="t" style="left:584.90px;top:83.05px;font-size:11.5px;transform:scaleX(1.1168);color:#e6e6e6;">Preamp: Off</div>
<div class="t" style="left:584.90px;top:96.85px;font-size:11.5px;transform:scaleX(1.1191);color:#e6e6e6;">µW Path: Standard</div>
<div class="t" style="left:584.90px;top:110.55px;font-size:11.5px;transform:scaleX(1.1208);color:#e6e6e6;">#PNO: Best Wide</div>
<div class="t" style="left:701.40px;top:69.35px;font-size:11.5px;transform:scaleX(1.1180);color:#e6e6e6;">Trig: Free Run</div>
<div class="t" style="left:701.40px;top:83.05px;font-size:11.5px;transform:scaleX(1.1119);color:#e6e6e6;">#IF Gain: Low</div>
<div class="t" style="left:817.50px;top:69.35px;font-size:11.5px;transform:scaleX(1.1104);color:#e6e6e6;">Carrier Ref Freq: 3.500000000 GHz</div>
<div class="t" style="left:817.50px;top:83.05px;font-size:11.5px;transform:scaleX(1.1154);color:#e6e6e6;">CC Info: Downlink, 1 CC</div>
<div class="t" style="left:254.80px;top:130.25px;font-size:11.5px;transform:scaleX(1.1066);color:#e6e6e6;">1 CC0-BWP1 IQ Meas</div>
<div class="t" style="left:254.80px;top:142.25px;font-size:11.5px;transform:scaleX(1.0745);color:#e6e6e6;">Time</div>
<div class="t" style="left:254.20px;top:155.41px;font-size:11px;transform:scaleX(1.3420);color:#a4a4a4;font-weight:bold;-webkit-text-stroke:0;">I-Q</div>
<div class="t" style="left:266.00px;top:167.55px;font-size:11.5px;transform:scaleX(1.0723);color:#a4a4a4;">1.20</div>
<div class="t" style="left:258.70px;top:182.05px;font-size:11.5px;transform:scaleX(1.1263);color:#a4a4a4;">900 m</div>
<div class="t" style="left:259.54px;top:197.05px;font-size:11.5px;transform:scaleX(1.1000);color:#a4a4a4;">600 m</div>
<div class="t" style="left:259.54px;top:212.05px;font-size:11.5px;transform:scaleX(1.1000);color:#a4a4a4;">300 m</div>
<div class="t" style="left:283.76px;top:227.05px;font-size:11.5px;transform:scaleX(1.1000);color:#a4a4a4;">0</div>
<div class="t" style="left:255.33px;top:242.05px;font-size:11.5px;transform:scaleX(1.1000);color:#a4a4a4;">-300 m</div>
<div class="t" style="left:255.33px;top:257.05px;font-size:11.5px;transform:scaleX(1.1000);color:#a4a4a4;">-600 m</div>
<div class="t" style="left:255.33px;top:272.05px;font-size:11.5px;transform:scaleX(1.1000);color:#a4a4a4;">-900 m</div>
<div class="t" style="left:261.17px;top:287.05px;font-size:11.5px;transform:scaleX(1.1000);color:#a4a4a4;">-1.20</div>
<div class="t" style="left:251.20px;top:308.69px;font-size:12px;transform:scaleX(1.1668);color:#ffffff;font-weight:bold;-webkit-text-stroke:0;">-2.924</div>
<div class="t" style="left:604.30px;top:308.59px;font-size:12px;transform:scaleX(1.1655);color:#ffffff;font-weight:bold;-webkit-text-stroke:0;">2.924</div>
<div class="t" style="left:650.80px;top:135.35px;font-size:11.5px;transform:scaleX(1.1107);color:#e6e6e6;">2 CC0 Raw Main Time</div>
<div class="t" style="left:650.00px;top:156.59px;font-size:12px;transform:scaleX(1.1786);color:#ffffff;font-weight:bold;-webkit-text-stroke:0;">Scale/Div 14.40 dB</div>
<div class="t" style="left:651.50px;top:180.91px;font-size:11.8px;transform:scaleX(1.0603);color:#a4a4a4;">0.644</div>
<div class="t" style="left:653.22px;top:194.38px;font-size:11.8px;transform:scaleX(1.1000);color:#a4a4a4;">-13.8</div>
<div class="t" style="left:653.22px;top:207.85px;font-size:11.8px;transform:scaleX(1.1000);color:#a4a4a4;">-28.2</div>
<div class="t" style="left:653.22px;top:221.32px;font-size:11.8px;transform:scaleX(1.1000);color:#a4a4a4;">-42.6</div>
<div class="t" style="left:653.22px;top:234.79px;font-size:11.8px;transform:scaleX(1.1000);color:#a4a4a4;">-56.9</div>
<div class="t" style="left:653.22px;top:248.26px;font-size:11.8px;transform:scaleX(1.1000);color:#a4a4a4;">-71.3</div>
<div class="t" style="left:653.22px;top:261.73px;font-size:11.8px;transform:scaleX(1.1000);color:#a4a4a4;">-85.7</div>
<div class="t" style="left:656.83px;top:275.20px;font-size:11.8px;transform:scaleX(1.1000);color:#a4a4a4;">-100</div>
<div class="t" style="left:657.79px;top:288.67px;font-size:11.8px;transform:scaleX(1.1000);color:#a4a4a4;">-115</div>
<div class="t" style="left:648.20px;top:308.69px;font-size:12px;transform:scaleX(1.1756);color:#ffffff;font-weight:bold;-webkit-text-stroke:0;">Start: 0.00 ns</div>
<div class="t" style="left:940.20px;top:308.69px;font-size:12px;transform:scaleX(1.1819);color:#ffffff;font-weight:bold;-webkit-text-stroke:0;">Stop: 22.00 ms</div>
<div class="t" style="left:253.80px;top:332.15px;font-size:11.5px;transform:scaleX(1.1117);color:#e6e6e6;">3 CC0 Spectrum</div>
<div class="t" style="left:252.50px;top:353.09px;font-size:12px;transform:scaleX(1.1814);color:#ffffff;font-weight:bold;-webkit-text-stroke:0;">Scale/Div 13.51 dB</div>
<div class="t" style="left:253.80px;top:376.38px;font-size:11.2px;transform:scaleX(1.1569);color:#a4a4a4;">-49.8</div>
<div class="t" style="left:255.25px;top:388.18px;font-size:11.2px;transform:scaleX(1.1000);color:#a4a4a4;">-63.3</div>
<div class="t" style="left:255.25px;top:399.98px;font-size:11.2px;transform:scaleX(1.1000);color:#a4a4a4;">-76.8</div>
<div class="t" style="left:255.25px;top:411.78px;font-size:11.2px;transform:scaleX(1.1000);color:#a4a4a4;">-90.3</div>
<div class="t" style="left:258.67px;top:423.58px;font-size:11.2px;transform:scaleX(1.1000);color:#a4a4a4;">-104</div>
<div class="t" style="left:259.58px;top:435.38px;font-size:11.2px;transform:scaleX(1.1000);color:#a4a4a4;">-117</div>
<div class="t" style="left:258.67px;top:447.18px;font-size:11.2px;transform:scaleX(1.1000);color:#a4a4a4;">-131</div>
<div class="t" style="left:258.67px;top:458.98px;font-size:11.2px;transform:scaleX(1.1000);color:#a4a4a4;">-144</div>
<div class="t" style="left:258.67px;top:470.78px;font-size:11.2px;transform:scaleX(1.1000);color:#a4a4a4;">-158</div>
<div class="t" style="left:251.10px;top:490.69px;font-size:12px;transform:scaleX(1.1838);color:#ffffff;font-weight:bold;-webkit-text-stroke:0;">Ctr: 3.5 GHz</div>
<div class="t" style="left:527.20px;top:490.49px;font-size:12px;transform:scaleX(1.1819);color:#ffffff;font-weight:bold;-webkit-text-stroke:0;">Width: 122.9 MHz</div>
<div class="t" style="left:251.10px;top:505.89px;font-size:12px;transform:scaleX(1.1823);color:#ffffff;font-weight:bold;-webkit-text-stroke:0;">Res BW: 895.2 Hz</div>
<div class="t" style="left:385.30px;top:505.89px;font-size:12px;transform:scaleX(1.1919);color:#ffffff;font-weight:bold;-webkit-text-stroke:0;">Info BW: 98.3 MHz</div>
<div class="t" style="left:651.10px;top:332.35px;font-size:11.5px;transform:scaleX(1.1139);color:#e6e6e6;">4 CC0 Error Summary</div>
<div class="t" style="left:652.20px;top:354.53px;font-size:12.5px;transform:scaleX(1.1379);color:#e6e6e6;">P-SS Evm</div>
<div class="t" style="left:828.90px;top:354.53px;font-size:12.5px;transform:scaleX(1.1409);color:#e6e6e6;">0.41 %</div>
<div class="t" style="left:652.20px;top:369.53px;font-size:12.5px;transform:scaleX(1.1379);color:#e6e6e6;">S-SS Evm</div>
<div class="t" style="left:828.90px;top:369.53px;font-size:12.5px;transform:scaleX(1.1409);color:#e6e6e6;">0.40 %</div>
<div class="t" style="left:652.20px;top:384.53px;font-size:12.5px;transform:scaleX(1.1360);color:#e6e6e6;">PBCH Evm</div>
<div class="t" style="left:828.90px;top:384.53px;font-size:12.5px;transform:scaleX(1.1409);color:#e6e6e6;">0.30 %</div>
<div class="t" style="left:652.20px;top:399.53px;font-size:12.5px;transform:scaleX(1.1384);color:#e6e6e6;">PBCH DMRS Evm</div>
<div class="t" style="left:828.90px;top:399.53px;font-size:12.5px;transform:scaleX(1.1409);color:#e6e6e6;">0.43 %</div>
<div class="t" style="left:652.20px;top:414.53px;font-size:12.5px;transform:scaleX(1.1380);color:#e6e6e6;">PDSCH Evm</div>
<div class="t" style="left:828.90px;top:414.53px;font-size:12.5px;transform:scaleX(1.1409);color:#e6e6e6;">0.63 %</div>
<div class="t" style="left:652.20px;top:429.53px;font-size:12.5px;transform:scaleX(1.1359);color:#e6e6e6;">PDSCH DMRS Evm</div>
<div class="t" style="left:828.90px;top:429.53px;font-size:12.5px;transform:scaleX(1.1409);color:#e6e6e6;">0.63 %</div>
<div class="t" style="left:652.20px;top:446.03px;font-size:12.5px;transform:scaleX(1.1360);color:#e6e6e6;">Freq Error</div>
<div class="t" style="left:776.70px;top:446.03px;font-size:12.5px;transform:scaleX(1.1431);color:#e6e6e6;">-6.08 Hz</div>
<div class="t" style="left:652.20px;top:461.13px;font-size:12.5px;transform:scaleX(1.1410);color:#e6e6e6;">Sync Corr</div>
<div class="t" style="left:804.00px;top:461.13px;font-size:12.5px;transform:scaleX(1.0975);color:#e6e6e6;">1.00</div>
</body></html>
